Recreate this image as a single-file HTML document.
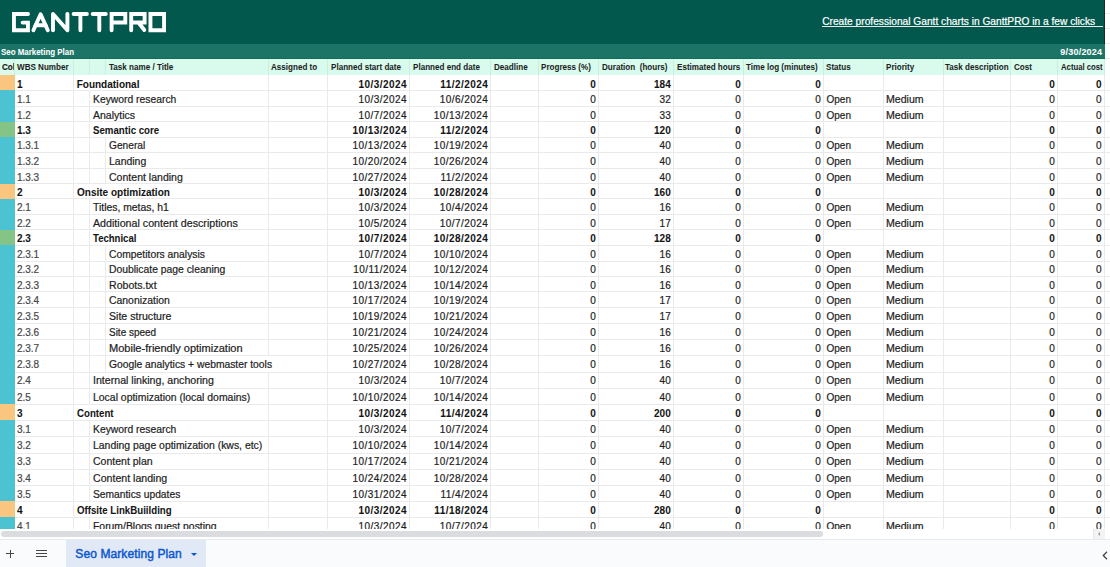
<!DOCTYPE html>
<html><head><meta charset="utf-8"><style>
html,body{margin:0;padding:0;}
body{width:1110px;height:567px;overflow:hidden;position:relative;background:#fff;font-family:"Liberation Sans",sans-serif;}
div{position:absolute;}
.t{position:absolute;white-space:nowrap;-webkit-text-stroke:0.2px currentColor;}
</style></head><body>
<div style="left:0.00px;top:0.00px;width:1104.60px;height:43.70px;background:#03584d;"></div>
<div style="left:1103.80px;top:0.00px;width:0.90px;height:43.70px;background:#1f2a27;"></div>
<div style="left:0.00px;top:43.70px;width:1104.60px;height:15.10px;background:#1b7466;"></div>
<div style="left:0.00px;top:58.80px;width:1104.60px;height:16.50px;background:#d8fbee;"></div>
<div style="left:0.00px;top:57.90px;width:1104.60px;height:0.90px;background:#146a5c;"></div>
<div style="left:1104.60px;top:12.90px;width:6.00px;height:1.00px;background:#eaeaea;"></div>
<div style="left:1104.60px;top:27.90px;width:6.00px;height:1.00px;background:#eaeaea;"></div>
<div style="left:1104.60px;top:43.20px;width:6.00px;height:1.00px;background:#eaeaea;"></div>
<div style="left:1104.60px;top:58.30px;width:6.00px;height:1.00px;background:#eaeaea;"></div>
<svg style="position:absolute;left:0;top:0" width="200" height="44" viewBox="0 0 200 44">
<g fill="none" stroke="#fff" stroke-width="3.9" stroke-linecap="round" stroke-linejoin="miter">
<path d="M28.0 14.05 H13.95 V30.25 H27.95 V22.6 H22.6"/>
<path d="M33.4 30.25 L40.6 14.3 L47.8 30.25" stroke-linejoin="round"/>
<path d="M35.6 25.2 H45.6"/>
<path d="M53 30.25 V14.05 L67.4 30.25 V14.05" stroke-linejoin="round"/>
<path d="M73.6 14.05 H86.9 M80.4 14.05 V30.2"/>
<path d="M92.7 14.05 H105.8 M99.3 14.05 V30.2"/>
<path d="M111.6 30.25 V14.05 H125.3 V22.55 H111.6"/>
<path d="M131.2 30.25 V14.05 H144.6 V22.55 H131.2 M138.4 22.55 L144.3 30.0"/>
<path d="M150.45 14.05 H164.05 V30.25 H150.45 Z"/>
</g></svg>
<span class="t" style="left:822.20px;top:16.07px;font-size:10.2px;line-height:11.720px;color:#fff;letter-spacing:0px;">Create professional Gantt charts in GanttPRO in a few clicks</span>
<div style="left:822.20px;top:25.90px;width:280.60px;height:1.20px;background:#e6ecea;"></div>
<span class="t" style="left:0.80px;top:46.75px;font-size:9.0px;line-height:10.341px;font-weight:bold;-webkit-text-stroke:0.05px currentColor;color:#fff;transform:scaleX(0.88);transform-origin:0 0;">Seo Marketing Plan</span>
<span class="t" style="right:7.80px;top:46.75px;font-size:9.0px;line-height:10.341px;font-weight:bold;-webkit-text-stroke:0.05px currentColor;color:#fff;letter-spacing:0.2px;">9/30/2024</span>
<div style="left:0;top:58.8px;width:13.5px;height:16.5px;overflow:hidden"><span class="t" style="left:1.5px;top:3.43px;font-size:8.7px;line-height:9.996px;font-weight:bold;color:#1f1f1f;transform:scaleX(0.93);transform-origin:0 0">Col</span></div>
<div style="left:13.50px;top:58.80px;width:1.00px;height:16.50px;background:#c9eee0;"></div>
<div style="left:72.80px;top:58.80px;width:1.00px;height:16.50px;background:#c9eee0;"></div>
<div style="left:89.10px;top:58.80px;width:1.00px;height:16.50px;background:#c9eee0;"></div>
<div style="left:105.20px;top:58.80px;width:1.00px;height:16.50px;background:#c9eee0;"></div>
<div style="left:268.20px;top:58.80px;width:1.00px;height:16.50px;background:#c9eee0;"></div>
<div style="left:327.10px;top:58.80px;width:1.00px;height:16.50px;background:#c9eee0;"></div>
<div style="left:408.80px;top:58.80px;width:1.00px;height:16.50px;background:#c9eee0;"></div>
<div style="left:490.00px;top:58.80px;width:1.00px;height:16.50px;background:#c9eee0;"></div>
<div style="left:537.80px;top:58.80px;width:1.00px;height:16.50px;background:#c9eee0;"></div>
<div style="left:597.80px;top:58.80px;width:1.00px;height:16.50px;background:#c9eee0;"></div>
<div style="left:672.70px;top:58.80px;width:1.00px;height:16.50px;background:#c9eee0;"></div>
<div style="left:742.80px;top:58.80px;width:1.00px;height:16.50px;background:#c9eee0;"></div>
<div style="left:822.90px;top:58.80px;width:1.00px;height:16.50px;background:#c9eee0;"></div>
<div style="left:882.80px;top:58.80px;width:1.00px;height:16.50px;background:#c9eee0;"></div>
<div style="left:942.50px;top:58.80px;width:1.00px;height:16.50px;background:#c9eee0;"></div>
<div style="left:1009.80px;top:58.80px;width:1.00px;height:16.50px;background:#c9eee0;"></div>
<div style="left:1057.30px;top:58.80px;width:1.00px;height:16.50px;background:#c9eee0;"></div>
<div style="left:1104.10px;top:58.80px;width:1.00px;height:16.50px;background:#c9eee0;"></div>
<span class="t" style="left:16.90px;top:62.23px;font-size:8.7px;line-height:9.996px;font-weight:bold;-webkit-text-stroke:0.05px currentColor;color:#1f1f1f;transform:scaleX(0.93);transform-origin:0 0;">WBS Number</span>
<span class="t" style="left:108.80px;top:62.23px;font-size:8.7px;line-height:9.996px;font-weight:bold;-webkit-text-stroke:0.05px currentColor;color:#1f1f1f;transform:scaleX(0.93);transform-origin:0 0;">Task name / Title</span>
<span class="t" style="left:271.10px;top:62.23px;font-size:8.7px;line-height:9.996px;font-weight:bold;-webkit-text-stroke:0.05px currentColor;color:#1f1f1f;transform:scaleX(0.93);transform-origin:0 0;">Assigned to</span>
<span class="t" style="left:330.50px;top:62.23px;font-size:8.7px;line-height:9.996px;font-weight:bold;-webkit-text-stroke:0.05px currentColor;color:#1f1f1f;transform:scaleX(0.93);transform-origin:0 0;">Planned start date</span>
<span class="t" style="left:412.60px;top:62.23px;font-size:8.7px;line-height:9.996px;font-weight:bold;-webkit-text-stroke:0.05px currentColor;color:#1f1f1f;transform:scaleX(0.93);transform-origin:0 0;">Planned end date</span>
<span class="t" style="left:493.70px;top:62.23px;font-size:8.7px;line-height:9.996px;font-weight:bold;-webkit-text-stroke:0.05px currentColor;color:#1f1f1f;transform:scaleX(0.93);transform-origin:0 0;">Deadline</span>
<span class="t" style="left:540.70px;top:62.23px;font-size:8.7px;line-height:9.996px;font-weight:bold;-webkit-text-stroke:0.05px currentColor;color:#1f1f1f;transform:scaleX(0.93);transform-origin:0 0;">Progress (%)</span>
<span class="t" style="left:601.60px;top:62.23px;font-size:8.7px;line-height:9.996px;font-weight:bold;-webkit-text-stroke:0.05px currentColor;color:#1f1f1f;transform:scaleX(0.93);transform-origin:0 0;">Duration&nbsp; (hours)</span>
<span class="t" style="left:676.50px;top:62.23px;font-size:8.7px;line-height:9.996px;font-weight:bold;-webkit-text-stroke:0.05px currentColor;color:#1f1f1f;transform:scaleX(0.93);transform-origin:0 0;">Estimated hours</span>
<span class="t" style="left:746.20px;top:62.23px;font-size:8.7px;line-height:9.996px;font-weight:bold;-webkit-text-stroke:0.05px currentColor;color:#1f1f1f;transform:scaleX(0.93);transform-origin:0 0;">Time log (minutes)</span>
<span class="t" style="left:826.30px;top:62.23px;font-size:8.7px;line-height:9.996px;font-weight:bold;-webkit-text-stroke:0.05px currentColor;color:#1f1f1f;transform:scaleX(0.93);transform-origin:0 0;">Status</span>
<span class="t" style="left:885.60px;top:62.23px;font-size:8.7px;line-height:9.996px;font-weight:bold;-webkit-text-stroke:0.05px currentColor;color:#1f1f1f;transform:scaleX(0.93);transform-origin:0 0;">Priority</span>
<span class="t" style="left:945.40px;top:62.23px;font-size:8.7px;line-height:9.996px;font-weight:bold;-webkit-text-stroke:0.05px currentColor;color:#1f1f1f;transform:scaleX(0.93);transform-origin:0 0;">Task description</span>
<span class="t" style="left:1013.50px;top:62.23px;font-size:8.7px;line-height:9.996px;font-weight:bold;-webkit-text-stroke:0.05px currentColor;color:#1f1f1f;transform:scaleX(0.93);transform-origin:0 0;">Cost</span>
<span class="t" style="left:1061.00px;top:62.23px;font-size:8.7px;line-height:9.996px;font-weight:bold;-webkit-text-stroke:0.05px currentColor;color:#1f1f1f;transform:scaleX(0.89);transform-origin:0 0;">Actual cost</span>
<div style="left:0;top:0;width:1110px;height:529px;overflow:hidden">
<div style="left:0.00px;top:75.00px;width:14.50px;height:15.00px;background:#f9c57f;"></div>
<div style="left:14.50px;top:89.90px;width:1095.50px;height:1.00px;background:#eaeaea;"></div>
<div style="left:72.80px;top:75.30px;width:1.00px;height:15.10px;background:#eaeaea;"></div>
<div style="left:268.20px;top:75.30px;width:1.00px;height:15.10px;background:#eaeaea;"></div>
<div style="left:327.10px;top:75.30px;width:1.00px;height:15.10px;background:#eaeaea;"></div>
<div style="left:408.80px;top:75.30px;width:1.00px;height:15.10px;background:#eaeaea;"></div>
<div style="left:490.00px;top:75.30px;width:1.00px;height:15.10px;background:#eaeaea;"></div>
<div style="left:537.80px;top:75.30px;width:1.00px;height:15.10px;background:#eaeaea;"></div>
<div style="left:597.80px;top:75.30px;width:1.00px;height:15.10px;background:#eaeaea;"></div>
<div style="left:672.70px;top:75.30px;width:1.00px;height:15.10px;background:#eaeaea;"></div>
<div style="left:742.80px;top:75.30px;width:1.00px;height:15.10px;background:#eaeaea;"></div>
<div style="left:822.90px;top:75.30px;width:1.00px;height:15.10px;background:#eaeaea;"></div>
<div style="left:882.80px;top:75.30px;width:1.00px;height:15.10px;background:#eaeaea;"></div>
<div style="left:942.50px;top:75.30px;width:1.00px;height:15.10px;background:#eaeaea;"></div>
<div style="left:1009.80px;top:75.30px;width:1.00px;height:15.10px;background:#eaeaea;"></div>
<div style="left:1057.30px;top:75.30px;width:1.00px;height:15.10px;background:#eaeaea;"></div>
<div style="left:1104.10px;top:75.30px;width:1.00px;height:15.10px;background:#eaeaea;"></div>
<span class="t" style="left:16.90px;top:78.65px;font-size:10.0px;line-height:11.490px;font-weight:bold;-webkit-text-stroke:0.05px currentColor;color:#141414;">1</span>
<span class="t" style="left:76.70px;top:78.65px;font-size:10.0px;line-height:11.490px;font-weight:bold;-webkit-text-stroke:0.05px currentColor;color:#141414;transform:scaleX(1.0);transform-origin:0 0;">Foundational</span>
<span class="t" style="right:702.95px;top:78.65px;font-size:10.0px;line-height:11.490px;font-weight:bold;-webkit-text-stroke:0.05px currentColor;color:#141414;letter-spacing:0.45px;">10/3/2024</span>
<span class="t" style="right:621.75px;top:78.65px;font-size:10.0px;line-height:11.490px;font-weight:bold;-webkit-text-stroke:0.05px currentColor;color:#141414;letter-spacing:0.45px;">11/2/2024</span>
<span class="t" style="right:514.20px;top:78.65px;font-size:10.0px;line-height:11.490px;font-weight:bold;-webkit-text-stroke:0.05px currentColor;color:#141414;">0</span>
<span class="t" style="right:439.30px;top:78.65px;font-size:10.0px;line-height:11.490px;font-weight:bold;-webkit-text-stroke:0.05px currentColor;color:#141414;">184</span>
<span class="t" style="right:369.20px;top:78.65px;font-size:10.0px;line-height:11.490px;font-weight:bold;-webkit-text-stroke:0.05px currentColor;color:#141414;">0</span>
<span class="t" style="right:289.10px;top:78.65px;font-size:10.0px;line-height:11.490px;font-weight:bold;-webkit-text-stroke:0.05px currentColor;color:#141414;">0</span>
<span class="t" style="right:55.30px;top:78.65px;font-size:10.0px;line-height:11.490px;font-weight:bold;-webkit-text-stroke:0.05px currentColor;color:#141414;">0</span>
<span class="t" style="right:8.50px;top:78.65px;font-size:10.0px;line-height:11.490px;font-weight:bold;-webkit-text-stroke:0.05px currentColor;color:#141414;">0</span>
<div style="left:0.00px;top:90.00px;width:14.50px;height:16.00px;background:#4cc3d3;"></div>
<div style="left:14.50px;top:105.80px;width:1095.50px;height:1.00px;background:#eaeaea;"></div>
<div style="left:72.80px;top:90.40px;width:1.00px;height:15.90px;background:#eaeaea;"></div>
<div style="left:89.10px;top:90.40px;width:1.00px;height:15.90px;background:#eaeaea;"></div>
<div style="left:268.20px;top:90.40px;width:1.00px;height:15.90px;background:#eaeaea;"></div>
<div style="left:327.10px;top:90.40px;width:1.00px;height:15.90px;background:#eaeaea;"></div>
<div style="left:408.80px;top:90.40px;width:1.00px;height:15.90px;background:#eaeaea;"></div>
<div style="left:490.00px;top:90.40px;width:1.00px;height:15.90px;background:#eaeaea;"></div>
<div style="left:537.80px;top:90.40px;width:1.00px;height:15.90px;background:#eaeaea;"></div>
<div style="left:597.80px;top:90.40px;width:1.00px;height:15.90px;background:#eaeaea;"></div>
<div style="left:672.70px;top:90.40px;width:1.00px;height:15.90px;background:#eaeaea;"></div>
<div style="left:742.80px;top:90.40px;width:1.00px;height:15.90px;background:#eaeaea;"></div>
<div style="left:822.90px;top:90.40px;width:1.00px;height:15.90px;background:#eaeaea;"></div>
<div style="left:882.80px;top:90.40px;width:1.00px;height:15.90px;background:#eaeaea;"></div>
<div style="left:942.50px;top:90.40px;width:1.00px;height:15.90px;background:#eaeaea;"></div>
<div style="left:1009.80px;top:90.40px;width:1.00px;height:15.90px;background:#eaeaea;"></div>
<div style="left:1057.30px;top:90.40px;width:1.00px;height:15.90px;background:#eaeaea;"></div>
<div style="left:1104.10px;top:90.40px;width:1.00px;height:15.90px;background:#eaeaea;"></div>
<span class="t" style="left:16.90px;top:93.75px;font-size:10.0px;line-height:11.490px;color:#474747;">1.1</span>
<span class="t" style="left:92.60px;top:93.75px;font-size:10.0px;line-height:11.490px;color:#1e1e1e;transform:scaleX(1.034);transform-origin:0 0;">Keyword research</span>
<span class="t" style="right:702.95px;top:93.75px;font-size:10.0px;line-height:11.490px;color:#1e1e1e;letter-spacing:0.45px;">10/3/2024</span>
<span class="t" style="right:621.75px;top:93.75px;font-size:10.0px;line-height:11.490px;color:#1e1e1e;letter-spacing:0.45px;">10/6/2024</span>
<span class="t" style="right:514.20px;top:93.75px;font-size:10.0px;line-height:11.490px;color:#1e1e1e;">0</span>
<span class="t" style="right:439.30px;top:93.75px;font-size:10.0px;line-height:11.490px;color:#1e1e1e;">32</span>
<span class="t" style="right:369.20px;top:93.75px;font-size:10.0px;line-height:11.490px;color:#1e1e1e;">0</span>
<span class="t" style="right:289.10px;top:93.75px;font-size:10.0px;line-height:11.490px;color:#1e1e1e;">0</span>
<span class="t" style="right:55.30px;top:93.75px;font-size:10.0px;line-height:11.490px;color:#1e1e1e;">0</span>
<span class="t" style="right:8.50px;top:93.75px;font-size:10.0px;line-height:11.490px;color:#1e1e1e;">0</span>
<span class="t" style="left:826.50px;top:93.75px;font-size:10.0px;line-height:11.490px;color:#1e1e1e;">Open</span>
<span class="t" style="left:886.30px;top:93.75px;font-size:10.0px;line-height:11.490px;color:#1e1e1e;transform:scaleX(1.06);transform-origin:0 0;">Medium</span>
<div style="left:0.00px;top:106.00px;width:14.50px;height:16.00px;background:#4cc3d3;"></div>
<div style="left:14.50px;top:121.10px;width:1095.50px;height:1.00px;background:#eaeaea;"></div>
<div style="left:72.80px;top:106.30px;width:1.00px;height:15.30px;background:#eaeaea;"></div>
<div style="left:89.10px;top:106.30px;width:1.00px;height:15.30px;background:#eaeaea;"></div>
<div style="left:268.20px;top:106.30px;width:1.00px;height:15.30px;background:#eaeaea;"></div>
<div style="left:327.10px;top:106.30px;width:1.00px;height:15.30px;background:#eaeaea;"></div>
<div style="left:408.80px;top:106.30px;width:1.00px;height:15.30px;background:#eaeaea;"></div>
<div style="left:490.00px;top:106.30px;width:1.00px;height:15.30px;background:#eaeaea;"></div>
<div style="left:537.80px;top:106.30px;width:1.00px;height:15.30px;background:#eaeaea;"></div>
<div style="left:597.80px;top:106.30px;width:1.00px;height:15.30px;background:#eaeaea;"></div>
<div style="left:672.70px;top:106.30px;width:1.00px;height:15.30px;background:#eaeaea;"></div>
<div style="left:742.80px;top:106.30px;width:1.00px;height:15.30px;background:#eaeaea;"></div>
<div style="left:822.90px;top:106.30px;width:1.00px;height:15.30px;background:#eaeaea;"></div>
<div style="left:882.80px;top:106.30px;width:1.00px;height:15.30px;background:#eaeaea;"></div>
<div style="left:942.50px;top:106.30px;width:1.00px;height:15.30px;background:#eaeaea;"></div>
<div style="left:1009.80px;top:106.30px;width:1.00px;height:15.30px;background:#eaeaea;"></div>
<div style="left:1057.30px;top:106.30px;width:1.00px;height:15.30px;background:#eaeaea;"></div>
<div style="left:1104.10px;top:106.30px;width:1.00px;height:15.30px;background:#eaeaea;"></div>
<span class="t" style="left:16.90px;top:109.65px;font-size:10.0px;line-height:11.490px;color:#474747;">1.2</span>
<span class="t" style="left:92.60px;top:109.65px;font-size:10.0px;line-height:11.490px;color:#1e1e1e;transform:scaleX(1.051);transform-origin:0 0;">Analytics</span>
<span class="t" style="right:702.95px;top:109.65px;font-size:10.0px;line-height:11.490px;color:#1e1e1e;letter-spacing:0.45px;">10/7/2024</span>
<span class="t" style="right:621.75px;top:109.65px;font-size:10.0px;line-height:11.490px;color:#1e1e1e;letter-spacing:0.45px;">10/13/2024</span>
<span class="t" style="right:514.20px;top:109.65px;font-size:10.0px;line-height:11.490px;color:#1e1e1e;">0</span>
<span class="t" style="right:439.30px;top:109.65px;font-size:10.0px;line-height:11.490px;color:#1e1e1e;">33</span>
<span class="t" style="right:369.20px;top:109.65px;font-size:10.0px;line-height:11.490px;color:#1e1e1e;">0</span>
<span class="t" style="right:289.10px;top:109.65px;font-size:10.0px;line-height:11.490px;color:#1e1e1e;">0</span>
<span class="t" style="right:55.30px;top:109.65px;font-size:10.0px;line-height:11.490px;color:#1e1e1e;">0</span>
<span class="t" style="right:8.50px;top:109.65px;font-size:10.0px;line-height:11.490px;color:#1e1e1e;">0</span>
<span class="t" style="left:826.50px;top:109.65px;font-size:10.0px;line-height:11.490px;color:#1e1e1e;">Open</span>
<span class="t" style="left:886.30px;top:109.65px;font-size:10.0px;line-height:11.490px;color:#1e1e1e;transform:scaleX(1.06);transform-origin:0 0;">Medium</span>
<div style="left:0.00px;top:122.00px;width:14.50px;height:15.00px;background:#84c486;"></div>
<div style="left:14.50px;top:136.60px;width:1095.50px;height:1.00px;background:#eaeaea;"></div>
<div style="left:72.80px;top:121.60px;width:1.00px;height:15.50px;background:#eaeaea;"></div>
<div style="left:89.10px;top:121.60px;width:1.00px;height:15.50px;background:#eaeaea;"></div>
<div style="left:268.20px;top:121.60px;width:1.00px;height:15.50px;background:#eaeaea;"></div>
<div style="left:327.10px;top:121.60px;width:1.00px;height:15.50px;background:#eaeaea;"></div>
<div style="left:408.80px;top:121.60px;width:1.00px;height:15.50px;background:#eaeaea;"></div>
<div style="left:490.00px;top:121.60px;width:1.00px;height:15.50px;background:#eaeaea;"></div>
<div style="left:537.80px;top:121.60px;width:1.00px;height:15.50px;background:#eaeaea;"></div>
<div style="left:597.80px;top:121.60px;width:1.00px;height:15.50px;background:#eaeaea;"></div>
<div style="left:672.70px;top:121.60px;width:1.00px;height:15.50px;background:#eaeaea;"></div>
<div style="left:742.80px;top:121.60px;width:1.00px;height:15.50px;background:#eaeaea;"></div>
<div style="left:822.90px;top:121.60px;width:1.00px;height:15.50px;background:#eaeaea;"></div>
<div style="left:882.80px;top:121.60px;width:1.00px;height:15.50px;background:#eaeaea;"></div>
<div style="left:942.50px;top:121.60px;width:1.00px;height:15.50px;background:#eaeaea;"></div>
<div style="left:1009.80px;top:121.60px;width:1.00px;height:15.50px;background:#eaeaea;"></div>
<div style="left:1057.30px;top:121.60px;width:1.00px;height:15.50px;background:#eaeaea;"></div>
<div style="left:1104.10px;top:121.60px;width:1.00px;height:15.50px;background:#eaeaea;"></div>
<span class="t" style="left:16.90px;top:124.95px;font-size:10.0px;line-height:11.490px;font-weight:bold;-webkit-text-stroke:0.05px currentColor;color:#141414;">1.3</span>
<span class="t" style="left:92.60px;top:124.95px;font-size:10.0px;line-height:11.490px;font-weight:bold;-webkit-text-stroke:0.05px currentColor;color:#141414;transform:scaleX(0.968);transform-origin:0 0;">Semantic core</span>
<span class="t" style="right:702.95px;top:124.95px;font-size:10.0px;line-height:11.490px;font-weight:bold;-webkit-text-stroke:0.05px currentColor;color:#141414;letter-spacing:0.45px;">10/13/2024</span>
<span class="t" style="right:621.75px;top:124.95px;font-size:10.0px;line-height:11.490px;font-weight:bold;-webkit-text-stroke:0.05px currentColor;color:#141414;letter-spacing:0.45px;">11/2/2024</span>
<span class="t" style="right:514.20px;top:124.95px;font-size:10.0px;line-height:11.490px;font-weight:bold;-webkit-text-stroke:0.05px currentColor;color:#141414;">0</span>
<span class="t" style="right:439.30px;top:124.95px;font-size:10.0px;line-height:11.490px;font-weight:bold;-webkit-text-stroke:0.05px currentColor;color:#141414;">120</span>
<span class="t" style="right:369.20px;top:124.95px;font-size:10.0px;line-height:11.490px;font-weight:bold;-webkit-text-stroke:0.05px currentColor;color:#141414;">0</span>
<span class="t" style="right:289.10px;top:124.95px;font-size:10.0px;line-height:11.490px;font-weight:bold;-webkit-text-stroke:0.05px currentColor;color:#141414;">0</span>
<span class="t" style="right:55.30px;top:124.95px;font-size:10.0px;line-height:11.490px;font-weight:bold;-webkit-text-stroke:0.05px currentColor;color:#141414;">0</span>
<span class="t" style="right:8.50px;top:124.95px;font-size:10.0px;line-height:11.490px;font-weight:bold;-webkit-text-stroke:0.05px currentColor;color:#141414;">0</span>
<div style="left:0.00px;top:137.00px;width:14.50px;height:16.00px;background:#4cc3d3;"></div>
<div style="left:14.50px;top:152.10px;width:1095.50px;height:1.00px;background:#eaeaea;"></div>
<div style="left:72.80px;top:137.10px;width:1.00px;height:15.50px;background:#eaeaea;"></div>
<div style="left:89.10px;top:137.10px;width:1.00px;height:15.50px;background:#eaeaea;"></div>
<div style="left:105.20px;top:137.10px;width:1.00px;height:15.50px;background:#eaeaea;"></div>
<div style="left:268.20px;top:137.10px;width:1.00px;height:15.50px;background:#eaeaea;"></div>
<div style="left:327.10px;top:137.10px;width:1.00px;height:15.50px;background:#eaeaea;"></div>
<div style="left:408.80px;top:137.10px;width:1.00px;height:15.50px;background:#eaeaea;"></div>
<div style="left:490.00px;top:137.10px;width:1.00px;height:15.50px;background:#eaeaea;"></div>
<div style="left:537.80px;top:137.10px;width:1.00px;height:15.50px;background:#eaeaea;"></div>
<div style="left:597.80px;top:137.10px;width:1.00px;height:15.50px;background:#eaeaea;"></div>
<div style="left:672.70px;top:137.10px;width:1.00px;height:15.50px;background:#eaeaea;"></div>
<div style="left:742.80px;top:137.10px;width:1.00px;height:15.50px;background:#eaeaea;"></div>
<div style="left:822.90px;top:137.10px;width:1.00px;height:15.50px;background:#eaeaea;"></div>
<div style="left:882.80px;top:137.10px;width:1.00px;height:15.50px;background:#eaeaea;"></div>
<div style="left:942.50px;top:137.10px;width:1.00px;height:15.50px;background:#eaeaea;"></div>
<div style="left:1009.80px;top:137.10px;width:1.00px;height:15.50px;background:#eaeaea;"></div>
<div style="left:1057.30px;top:137.10px;width:1.00px;height:15.50px;background:#eaeaea;"></div>
<div style="left:1104.10px;top:137.10px;width:1.00px;height:15.50px;background:#eaeaea;"></div>
<span class="t" style="left:16.90px;top:140.45px;font-size:10.0px;line-height:11.490px;color:#474747;">1.3.1</span>
<span class="t" style="left:108.80px;top:140.45px;font-size:10.0px;line-height:11.490px;color:#1e1e1e;transform:scaleX(1.017);transform-origin:0 0;">General</span>
<span class="t" style="right:702.95px;top:140.45px;font-size:10.0px;line-height:11.490px;color:#1e1e1e;letter-spacing:0.45px;">10/13/2024</span>
<span class="t" style="right:621.75px;top:140.45px;font-size:10.0px;line-height:11.490px;color:#1e1e1e;letter-spacing:0.45px;">10/19/2024</span>
<span class="t" style="right:514.20px;top:140.45px;font-size:10.0px;line-height:11.490px;color:#1e1e1e;">0</span>
<span class="t" style="right:439.30px;top:140.45px;font-size:10.0px;line-height:11.490px;color:#1e1e1e;">40</span>
<span class="t" style="right:369.20px;top:140.45px;font-size:10.0px;line-height:11.490px;color:#1e1e1e;">0</span>
<span class="t" style="right:289.10px;top:140.45px;font-size:10.0px;line-height:11.490px;color:#1e1e1e;">0</span>
<span class="t" style="right:55.30px;top:140.45px;font-size:10.0px;line-height:11.490px;color:#1e1e1e;">0</span>
<span class="t" style="right:8.50px;top:140.45px;font-size:10.0px;line-height:11.490px;color:#1e1e1e;">0</span>
<span class="t" style="left:826.50px;top:140.45px;font-size:10.0px;line-height:11.490px;color:#1e1e1e;">Open</span>
<span class="t" style="left:886.30px;top:140.45px;font-size:10.0px;line-height:11.490px;color:#1e1e1e;transform:scaleX(1.06);transform-origin:0 0;">Medium</span>
<div style="left:0.00px;top:153.00px;width:14.50px;height:15.00px;background:#4cc3d3;"></div>
<div style="left:14.50px;top:168.00px;width:1095.50px;height:1.00px;background:#eaeaea;"></div>
<div style="left:72.80px;top:152.60px;width:1.00px;height:15.90px;background:#eaeaea;"></div>
<div style="left:89.10px;top:152.60px;width:1.00px;height:15.90px;background:#eaeaea;"></div>
<div style="left:105.20px;top:152.60px;width:1.00px;height:15.90px;background:#eaeaea;"></div>
<div style="left:268.20px;top:152.60px;width:1.00px;height:15.90px;background:#eaeaea;"></div>
<div style="left:327.10px;top:152.60px;width:1.00px;height:15.90px;background:#eaeaea;"></div>
<div style="left:408.80px;top:152.60px;width:1.00px;height:15.90px;background:#eaeaea;"></div>
<div style="left:490.00px;top:152.60px;width:1.00px;height:15.90px;background:#eaeaea;"></div>
<div style="left:537.80px;top:152.60px;width:1.00px;height:15.90px;background:#eaeaea;"></div>
<div style="left:597.80px;top:152.60px;width:1.00px;height:15.90px;background:#eaeaea;"></div>
<div style="left:672.70px;top:152.60px;width:1.00px;height:15.90px;background:#eaeaea;"></div>
<div style="left:742.80px;top:152.60px;width:1.00px;height:15.90px;background:#eaeaea;"></div>
<div style="left:822.90px;top:152.60px;width:1.00px;height:15.90px;background:#eaeaea;"></div>
<div style="left:882.80px;top:152.60px;width:1.00px;height:15.90px;background:#eaeaea;"></div>
<div style="left:942.50px;top:152.60px;width:1.00px;height:15.90px;background:#eaeaea;"></div>
<div style="left:1009.80px;top:152.60px;width:1.00px;height:15.90px;background:#eaeaea;"></div>
<div style="left:1057.30px;top:152.60px;width:1.00px;height:15.90px;background:#eaeaea;"></div>
<div style="left:1104.10px;top:152.60px;width:1.00px;height:15.90px;background:#eaeaea;"></div>
<span class="t" style="left:16.90px;top:155.95px;font-size:10.0px;line-height:11.490px;color:#474747;">1.3.2</span>
<span class="t" style="left:108.80px;top:155.95px;font-size:10.0px;line-height:11.490px;color:#1e1e1e;transform:scaleX(1.047);transform-origin:0 0;">Landing</span>
<span class="t" style="right:702.95px;top:155.95px;font-size:10.0px;line-height:11.490px;color:#1e1e1e;letter-spacing:0.45px;">10/20/2024</span>
<span class="t" style="right:621.75px;top:155.95px;font-size:10.0px;line-height:11.490px;color:#1e1e1e;letter-spacing:0.45px;">10/26/2024</span>
<span class="t" style="right:514.20px;top:155.95px;font-size:10.0px;line-height:11.490px;color:#1e1e1e;">0</span>
<span class="t" style="right:439.30px;top:155.95px;font-size:10.0px;line-height:11.490px;color:#1e1e1e;">40</span>
<span class="t" style="right:369.20px;top:155.95px;font-size:10.0px;line-height:11.490px;color:#1e1e1e;">0</span>
<span class="t" style="right:289.10px;top:155.95px;font-size:10.0px;line-height:11.490px;color:#1e1e1e;">0</span>
<span class="t" style="right:55.30px;top:155.95px;font-size:10.0px;line-height:11.490px;color:#1e1e1e;">0</span>
<span class="t" style="right:8.50px;top:155.95px;font-size:10.0px;line-height:11.490px;color:#1e1e1e;">0</span>
<span class="t" style="left:826.50px;top:155.95px;font-size:10.0px;line-height:11.490px;color:#1e1e1e;">Open</span>
<span class="t" style="left:886.30px;top:155.95px;font-size:10.0px;line-height:11.490px;color:#1e1e1e;transform:scaleX(1.06);transform-origin:0 0;">Medium</span>
<div style="left:0.00px;top:168.00px;width:14.50px;height:16.00px;background:#4cc3d3;"></div>
<div style="left:14.50px;top:183.00px;width:1095.50px;height:1.00px;background:#eaeaea;"></div>
<div style="left:72.80px;top:168.50px;width:1.00px;height:15.00px;background:#eaeaea;"></div>
<div style="left:89.10px;top:168.50px;width:1.00px;height:15.00px;background:#eaeaea;"></div>
<div style="left:105.20px;top:168.50px;width:1.00px;height:15.00px;background:#eaeaea;"></div>
<div style="left:268.20px;top:168.50px;width:1.00px;height:15.00px;background:#eaeaea;"></div>
<div style="left:327.10px;top:168.50px;width:1.00px;height:15.00px;background:#eaeaea;"></div>
<div style="left:408.80px;top:168.50px;width:1.00px;height:15.00px;background:#eaeaea;"></div>
<div style="left:490.00px;top:168.50px;width:1.00px;height:15.00px;background:#eaeaea;"></div>
<div style="left:537.80px;top:168.50px;width:1.00px;height:15.00px;background:#eaeaea;"></div>
<div style="left:597.80px;top:168.50px;width:1.00px;height:15.00px;background:#eaeaea;"></div>
<div style="left:672.70px;top:168.50px;width:1.00px;height:15.00px;background:#eaeaea;"></div>
<div style="left:742.80px;top:168.50px;width:1.00px;height:15.00px;background:#eaeaea;"></div>
<div style="left:822.90px;top:168.50px;width:1.00px;height:15.00px;background:#eaeaea;"></div>
<div style="left:882.80px;top:168.50px;width:1.00px;height:15.00px;background:#eaeaea;"></div>
<div style="left:942.50px;top:168.50px;width:1.00px;height:15.00px;background:#eaeaea;"></div>
<div style="left:1009.80px;top:168.50px;width:1.00px;height:15.00px;background:#eaeaea;"></div>
<div style="left:1057.30px;top:168.50px;width:1.00px;height:15.00px;background:#eaeaea;"></div>
<div style="left:1104.10px;top:168.50px;width:1.00px;height:15.00px;background:#eaeaea;"></div>
<span class="t" style="left:16.90px;top:171.85px;font-size:10.0px;line-height:11.490px;color:#474747;">1.3.3</span>
<span class="t" style="left:108.80px;top:171.85px;font-size:10.0px;line-height:11.490px;color:#1e1e1e;transform:scaleX(1.054);transform-origin:0 0;">Content landing</span>
<span class="t" style="right:702.95px;top:171.85px;font-size:10.0px;line-height:11.490px;color:#1e1e1e;letter-spacing:0.45px;">10/27/2024</span>
<span class="t" style="right:621.75px;top:171.85px;font-size:10.0px;line-height:11.490px;color:#1e1e1e;letter-spacing:0.45px;">11/2/2024</span>
<span class="t" style="right:514.20px;top:171.85px;font-size:10.0px;line-height:11.490px;color:#1e1e1e;">0</span>
<span class="t" style="right:439.30px;top:171.85px;font-size:10.0px;line-height:11.490px;color:#1e1e1e;">40</span>
<span class="t" style="right:369.20px;top:171.85px;font-size:10.0px;line-height:11.490px;color:#1e1e1e;">0</span>
<span class="t" style="right:289.10px;top:171.85px;font-size:10.0px;line-height:11.490px;color:#1e1e1e;">0</span>
<span class="t" style="right:55.30px;top:171.85px;font-size:10.0px;line-height:11.490px;color:#1e1e1e;">0</span>
<span class="t" style="right:8.50px;top:171.85px;font-size:10.0px;line-height:11.490px;color:#1e1e1e;">0</span>
<span class="t" style="left:826.50px;top:171.85px;font-size:10.0px;line-height:11.490px;color:#1e1e1e;">Open</span>
<span class="t" style="left:886.30px;top:171.85px;font-size:10.0px;line-height:11.490px;color:#1e1e1e;transform:scaleX(1.06);transform-origin:0 0;">Medium</span>
<div style="left:0.00px;top:184.00px;width:14.50px;height:15.00px;background:#f9c57f;"></div>
<div style="left:14.50px;top:198.10px;width:1095.50px;height:1.00px;background:#eaeaea;"></div>
<div style="left:72.80px;top:183.50px;width:1.00px;height:15.10px;background:#eaeaea;"></div>
<div style="left:268.20px;top:183.50px;width:1.00px;height:15.10px;background:#eaeaea;"></div>
<div style="left:327.10px;top:183.50px;width:1.00px;height:15.10px;background:#eaeaea;"></div>
<div style="left:408.80px;top:183.50px;width:1.00px;height:15.10px;background:#eaeaea;"></div>
<div style="left:490.00px;top:183.50px;width:1.00px;height:15.10px;background:#eaeaea;"></div>
<div style="left:537.80px;top:183.50px;width:1.00px;height:15.10px;background:#eaeaea;"></div>
<div style="left:597.80px;top:183.50px;width:1.00px;height:15.10px;background:#eaeaea;"></div>
<div style="left:672.70px;top:183.50px;width:1.00px;height:15.10px;background:#eaeaea;"></div>
<div style="left:742.80px;top:183.50px;width:1.00px;height:15.10px;background:#eaeaea;"></div>
<div style="left:822.90px;top:183.50px;width:1.00px;height:15.10px;background:#eaeaea;"></div>
<div style="left:882.80px;top:183.50px;width:1.00px;height:15.10px;background:#eaeaea;"></div>
<div style="left:942.50px;top:183.50px;width:1.00px;height:15.10px;background:#eaeaea;"></div>
<div style="left:1009.80px;top:183.50px;width:1.00px;height:15.10px;background:#eaeaea;"></div>
<div style="left:1057.30px;top:183.50px;width:1.00px;height:15.10px;background:#eaeaea;"></div>
<div style="left:1104.10px;top:183.50px;width:1.00px;height:15.10px;background:#eaeaea;"></div>
<span class="t" style="left:16.90px;top:186.85px;font-size:10.0px;line-height:11.490px;font-weight:bold;-webkit-text-stroke:0.05px currentColor;color:#141414;">2</span>
<span class="t" style="left:76.70px;top:186.85px;font-size:10.0px;line-height:11.490px;font-weight:bold;-webkit-text-stroke:0.05px currentColor;color:#141414;transform:scaleX(1.001);transform-origin:0 0;">Onsite optimization</span>
<span class="t" style="right:702.95px;top:186.85px;font-size:10.0px;line-height:11.490px;font-weight:bold;-webkit-text-stroke:0.05px currentColor;color:#141414;letter-spacing:0.45px;">10/3/2024</span>
<span class="t" style="right:621.75px;top:186.85px;font-size:10.0px;line-height:11.490px;font-weight:bold;-webkit-text-stroke:0.05px currentColor;color:#141414;letter-spacing:0.45px;">10/28/2024</span>
<span class="t" style="right:514.20px;top:186.85px;font-size:10.0px;line-height:11.490px;font-weight:bold;-webkit-text-stroke:0.05px currentColor;color:#141414;">0</span>
<span class="t" style="right:439.30px;top:186.85px;font-size:10.0px;line-height:11.490px;font-weight:bold;-webkit-text-stroke:0.05px currentColor;color:#141414;">160</span>
<span class="t" style="right:369.20px;top:186.85px;font-size:10.0px;line-height:11.490px;font-weight:bold;-webkit-text-stroke:0.05px currentColor;color:#141414;">0</span>
<span class="t" style="right:289.10px;top:186.85px;font-size:10.0px;line-height:11.490px;font-weight:bold;-webkit-text-stroke:0.05px currentColor;color:#141414;">0</span>
<span class="t" style="right:55.30px;top:186.85px;font-size:10.0px;line-height:11.490px;font-weight:bold;-webkit-text-stroke:0.05px currentColor;color:#141414;">0</span>
<span class="t" style="right:8.50px;top:186.85px;font-size:10.0px;line-height:11.490px;font-weight:bold;-webkit-text-stroke:0.05px currentColor;color:#141414;">0</span>
<div style="left:0.00px;top:199.00px;width:14.50px;height:16.00px;background:#4cc3d3;"></div>
<div style="left:14.50px;top:214.10px;width:1095.50px;height:1.00px;background:#eaeaea;"></div>
<div style="left:72.80px;top:198.60px;width:1.00px;height:16.00px;background:#eaeaea;"></div>
<div style="left:89.10px;top:198.60px;width:1.00px;height:16.00px;background:#eaeaea;"></div>
<div style="left:268.20px;top:198.60px;width:1.00px;height:16.00px;background:#eaeaea;"></div>
<div style="left:327.10px;top:198.60px;width:1.00px;height:16.00px;background:#eaeaea;"></div>
<div style="left:408.80px;top:198.60px;width:1.00px;height:16.00px;background:#eaeaea;"></div>
<div style="left:490.00px;top:198.60px;width:1.00px;height:16.00px;background:#eaeaea;"></div>
<div style="left:537.80px;top:198.60px;width:1.00px;height:16.00px;background:#eaeaea;"></div>
<div style="left:597.80px;top:198.60px;width:1.00px;height:16.00px;background:#eaeaea;"></div>
<div style="left:672.70px;top:198.60px;width:1.00px;height:16.00px;background:#eaeaea;"></div>
<div style="left:742.80px;top:198.60px;width:1.00px;height:16.00px;background:#eaeaea;"></div>
<div style="left:822.90px;top:198.60px;width:1.00px;height:16.00px;background:#eaeaea;"></div>
<div style="left:882.80px;top:198.60px;width:1.00px;height:16.00px;background:#eaeaea;"></div>
<div style="left:942.50px;top:198.60px;width:1.00px;height:16.00px;background:#eaeaea;"></div>
<div style="left:1009.80px;top:198.60px;width:1.00px;height:16.00px;background:#eaeaea;"></div>
<div style="left:1057.30px;top:198.60px;width:1.00px;height:16.00px;background:#eaeaea;"></div>
<div style="left:1104.10px;top:198.60px;width:1.00px;height:16.00px;background:#eaeaea;"></div>
<span class="t" style="left:16.90px;top:201.95px;font-size:10.0px;line-height:11.490px;color:#474747;">2.1</span>
<span class="t" style="left:92.60px;top:201.95px;font-size:10.0px;line-height:11.490px;color:#1e1e1e;transform:scaleX(1.037);transform-origin:0 0;">Titles, metas, h1</span>
<span class="t" style="right:702.95px;top:201.95px;font-size:10.0px;line-height:11.490px;color:#1e1e1e;letter-spacing:0.45px;">10/3/2024</span>
<span class="t" style="right:621.75px;top:201.95px;font-size:10.0px;line-height:11.490px;color:#1e1e1e;letter-spacing:0.45px;">10/4/2024</span>
<span class="t" style="right:514.20px;top:201.95px;font-size:10.0px;line-height:11.490px;color:#1e1e1e;">0</span>
<span class="t" style="right:439.30px;top:201.95px;font-size:10.0px;line-height:11.490px;color:#1e1e1e;">16</span>
<span class="t" style="right:369.20px;top:201.95px;font-size:10.0px;line-height:11.490px;color:#1e1e1e;">0</span>
<span class="t" style="right:289.10px;top:201.95px;font-size:10.0px;line-height:11.490px;color:#1e1e1e;">0</span>
<span class="t" style="right:55.30px;top:201.95px;font-size:10.0px;line-height:11.490px;color:#1e1e1e;">0</span>
<span class="t" style="right:8.50px;top:201.95px;font-size:10.0px;line-height:11.490px;color:#1e1e1e;">0</span>
<span class="t" style="left:826.50px;top:201.95px;font-size:10.0px;line-height:11.490px;color:#1e1e1e;">Open</span>
<span class="t" style="left:886.30px;top:201.95px;font-size:10.0px;line-height:11.490px;color:#1e1e1e;transform:scaleX(1.06);transform-origin:0 0;">Medium</span>
<div style="left:0.00px;top:215.00px;width:14.50px;height:15.00px;background:#4cc3d3;"></div>
<div style="left:14.50px;top:229.40px;width:1095.50px;height:1.00px;background:#eaeaea;"></div>
<div style="left:72.80px;top:214.60px;width:1.00px;height:15.30px;background:#eaeaea;"></div>
<div style="left:89.10px;top:214.60px;width:1.00px;height:15.30px;background:#eaeaea;"></div>
<div style="left:268.20px;top:214.60px;width:1.00px;height:15.30px;background:#eaeaea;"></div>
<div style="left:327.10px;top:214.60px;width:1.00px;height:15.30px;background:#eaeaea;"></div>
<div style="left:408.80px;top:214.60px;width:1.00px;height:15.30px;background:#eaeaea;"></div>
<div style="left:490.00px;top:214.60px;width:1.00px;height:15.30px;background:#eaeaea;"></div>
<div style="left:537.80px;top:214.60px;width:1.00px;height:15.30px;background:#eaeaea;"></div>
<div style="left:597.80px;top:214.60px;width:1.00px;height:15.30px;background:#eaeaea;"></div>
<div style="left:672.70px;top:214.60px;width:1.00px;height:15.30px;background:#eaeaea;"></div>
<div style="left:742.80px;top:214.60px;width:1.00px;height:15.30px;background:#eaeaea;"></div>
<div style="left:822.90px;top:214.60px;width:1.00px;height:15.30px;background:#eaeaea;"></div>
<div style="left:882.80px;top:214.60px;width:1.00px;height:15.30px;background:#eaeaea;"></div>
<div style="left:942.50px;top:214.60px;width:1.00px;height:15.30px;background:#eaeaea;"></div>
<div style="left:1009.80px;top:214.60px;width:1.00px;height:15.30px;background:#eaeaea;"></div>
<div style="left:1057.30px;top:214.60px;width:1.00px;height:15.30px;background:#eaeaea;"></div>
<div style="left:1104.10px;top:214.60px;width:1.00px;height:15.30px;background:#eaeaea;"></div>
<span class="t" style="left:16.90px;top:217.95px;font-size:10.0px;line-height:11.490px;color:#474747;">2.2</span>
<span class="t" style="left:92.60px;top:217.95px;font-size:10.0px;line-height:11.490px;color:#1e1e1e;transform:scaleX(1.067);transform-origin:0 0;">Additional content descriptions</span>
<span class="t" style="right:702.95px;top:217.95px;font-size:10.0px;line-height:11.490px;color:#1e1e1e;letter-spacing:0.45px;">10/5/2024</span>
<span class="t" style="right:621.75px;top:217.95px;font-size:10.0px;line-height:11.490px;color:#1e1e1e;letter-spacing:0.45px;">10/7/2024</span>
<span class="t" style="right:514.20px;top:217.95px;font-size:10.0px;line-height:11.490px;color:#1e1e1e;">0</span>
<span class="t" style="right:439.30px;top:217.95px;font-size:10.0px;line-height:11.490px;color:#1e1e1e;">17</span>
<span class="t" style="right:369.20px;top:217.95px;font-size:10.0px;line-height:11.490px;color:#1e1e1e;">0</span>
<span class="t" style="right:289.10px;top:217.95px;font-size:10.0px;line-height:11.490px;color:#1e1e1e;">0</span>
<span class="t" style="right:55.30px;top:217.95px;font-size:10.0px;line-height:11.490px;color:#1e1e1e;">0</span>
<span class="t" style="right:8.50px;top:217.95px;font-size:10.0px;line-height:11.490px;color:#1e1e1e;">0</span>
<span class="t" style="left:826.50px;top:217.95px;font-size:10.0px;line-height:11.490px;color:#1e1e1e;">Open</span>
<span class="t" style="left:886.30px;top:217.95px;font-size:10.0px;line-height:11.490px;color:#1e1e1e;transform:scaleX(1.06);transform-origin:0 0;">Medium</span>
<div style="left:0.00px;top:230.00px;width:14.50px;height:15.00px;background:#84c486;"></div>
<div style="left:14.50px;top:244.70px;width:1095.50px;height:1.00px;background:#eaeaea;"></div>
<div style="left:72.80px;top:229.90px;width:1.00px;height:15.30px;background:#eaeaea;"></div>
<div style="left:89.10px;top:229.90px;width:1.00px;height:15.30px;background:#eaeaea;"></div>
<div style="left:268.20px;top:229.90px;width:1.00px;height:15.30px;background:#eaeaea;"></div>
<div style="left:327.10px;top:229.90px;width:1.00px;height:15.30px;background:#eaeaea;"></div>
<div style="left:408.80px;top:229.90px;width:1.00px;height:15.30px;background:#eaeaea;"></div>
<div style="left:490.00px;top:229.90px;width:1.00px;height:15.30px;background:#eaeaea;"></div>
<div style="left:537.80px;top:229.90px;width:1.00px;height:15.30px;background:#eaeaea;"></div>
<div style="left:597.80px;top:229.90px;width:1.00px;height:15.30px;background:#eaeaea;"></div>
<div style="left:672.70px;top:229.90px;width:1.00px;height:15.30px;background:#eaeaea;"></div>
<div style="left:742.80px;top:229.90px;width:1.00px;height:15.30px;background:#eaeaea;"></div>
<div style="left:822.90px;top:229.90px;width:1.00px;height:15.30px;background:#eaeaea;"></div>
<div style="left:882.80px;top:229.90px;width:1.00px;height:15.30px;background:#eaeaea;"></div>
<div style="left:942.50px;top:229.90px;width:1.00px;height:15.30px;background:#eaeaea;"></div>
<div style="left:1009.80px;top:229.90px;width:1.00px;height:15.30px;background:#eaeaea;"></div>
<div style="left:1057.30px;top:229.90px;width:1.00px;height:15.30px;background:#eaeaea;"></div>
<div style="left:1104.10px;top:229.90px;width:1.00px;height:15.30px;background:#eaeaea;"></div>
<span class="t" style="left:16.90px;top:233.25px;font-size:10.0px;line-height:11.490px;font-weight:bold;-webkit-text-stroke:0.05px currentColor;color:#141414;">2.3</span>
<span class="t" style="left:92.60px;top:233.25px;font-size:10.0px;line-height:11.490px;font-weight:bold;-webkit-text-stroke:0.05px currentColor;color:#141414;transform:scaleX(0.956);transform-origin:0 0;">Technical</span>
<span class="t" style="right:702.95px;top:233.25px;font-size:10.0px;line-height:11.490px;font-weight:bold;-webkit-text-stroke:0.05px currentColor;color:#141414;letter-spacing:0.45px;">10/7/2024</span>
<span class="t" style="right:621.75px;top:233.25px;font-size:10.0px;line-height:11.490px;font-weight:bold;-webkit-text-stroke:0.05px currentColor;color:#141414;letter-spacing:0.45px;">10/28/2024</span>
<span class="t" style="right:514.20px;top:233.25px;font-size:10.0px;line-height:11.490px;font-weight:bold;-webkit-text-stroke:0.05px currentColor;color:#141414;">0</span>
<span class="t" style="right:439.30px;top:233.25px;font-size:10.0px;line-height:11.490px;font-weight:bold;-webkit-text-stroke:0.05px currentColor;color:#141414;">128</span>
<span class="t" style="right:369.20px;top:233.25px;font-size:10.0px;line-height:11.490px;font-weight:bold;-webkit-text-stroke:0.05px currentColor;color:#141414;">0</span>
<span class="t" style="right:289.10px;top:233.25px;font-size:10.0px;line-height:11.490px;font-weight:bold;-webkit-text-stroke:0.05px currentColor;color:#141414;">0</span>
<span class="t" style="right:55.30px;top:233.25px;font-size:10.0px;line-height:11.490px;font-weight:bold;-webkit-text-stroke:0.05px currentColor;color:#141414;">0</span>
<span class="t" style="right:8.50px;top:233.25px;font-size:10.0px;line-height:11.490px;font-weight:bold;-webkit-text-stroke:0.05px currentColor;color:#141414;">0</span>
<div style="left:0.00px;top:245.00px;width:14.50px;height:16.00px;background:#4cc3d3;"></div>
<div style="left:14.50px;top:260.60px;width:1095.50px;height:1.00px;background:#eaeaea;"></div>
<div style="left:72.80px;top:245.20px;width:1.00px;height:15.90px;background:#eaeaea;"></div>
<div style="left:89.10px;top:245.20px;width:1.00px;height:15.90px;background:#eaeaea;"></div>
<div style="left:105.20px;top:245.20px;width:1.00px;height:15.90px;background:#eaeaea;"></div>
<div style="left:268.20px;top:245.20px;width:1.00px;height:15.90px;background:#eaeaea;"></div>
<div style="left:327.10px;top:245.20px;width:1.00px;height:15.90px;background:#eaeaea;"></div>
<div style="left:408.80px;top:245.20px;width:1.00px;height:15.90px;background:#eaeaea;"></div>
<div style="left:490.00px;top:245.20px;width:1.00px;height:15.90px;background:#eaeaea;"></div>
<div style="left:537.80px;top:245.20px;width:1.00px;height:15.90px;background:#eaeaea;"></div>
<div style="left:597.80px;top:245.20px;width:1.00px;height:15.90px;background:#eaeaea;"></div>
<div style="left:672.70px;top:245.20px;width:1.00px;height:15.90px;background:#eaeaea;"></div>
<div style="left:742.80px;top:245.20px;width:1.00px;height:15.90px;background:#eaeaea;"></div>
<div style="left:822.90px;top:245.20px;width:1.00px;height:15.90px;background:#eaeaea;"></div>
<div style="left:882.80px;top:245.20px;width:1.00px;height:15.90px;background:#eaeaea;"></div>
<div style="left:942.50px;top:245.20px;width:1.00px;height:15.90px;background:#eaeaea;"></div>
<div style="left:1009.80px;top:245.20px;width:1.00px;height:15.90px;background:#eaeaea;"></div>
<div style="left:1057.30px;top:245.20px;width:1.00px;height:15.90px;background:#eaeaea;"></div>
<div style="left:1104.10px;top:245.20px;width:1.00px;height:15.90px;background:#eaeaea;"></div>
<span class="t" style="left:16.90px;top:248.55px;font-size:10.0px;line-height:11.490px;color:#474747;">2.3.1</span>
<span class="t" style="left:108.80px;top:248.55px;font-size:10.0px;line-height:11.490px;color:#1e1e1e;transform:scaleX(1.034);transform-origin:0 0;">Competitors analysis</span>
<span class="t" style="right:702.95px;top:248.55px;font-size:10.0px;line-height:11.490px;color:#1e1e1e;letter-spacing:0.45px;">10/7/2024</span>
<span class="t" style="right:621.75px;top:248.55px;font-size:10.0px;line-height:11.490px;color:#1e1e1e;letter-spacing:0.45px;">10/10/2024</span>
<span class="t" style="right:514.20px;top:248.55px;font-size:10.0px;line-height:11.490px;color:#1e1e1e;">0</span>
<span class="t" style="right:439.30px;top:248.55px;font-size:10.0px;line-height:11.490px;color:#1e1e1e;">16</span>
<span class="t" style="right:369.20px;top:248.55px;font-size:10.0px;line-height:11.490px;color:#1e1e1e;">0</span>
<span class="t" style="right:289.10px;top:248.55px;font-size:10.0px;line-height:11.490px;color:#1e1e1e;">0</span>
<span class="t" style="right:55.30px;top:248.55px;font-size:10.0px;line-height:11.490px;color:#1e1e1e;">0</span>
<span class="t" style="right:8.50px;top:248.55px;font-size:10.0px;line-height:11.490px;color:#1e1e1e;">0</span>
<span class="t" style="left:826.50px;top:248.55px;font-size:10.0px;line-height:11.490px;color:#1e1e1e;">Open</span>
<span class="t" style="left:886.30px;top:248.55px;font-size:10.0px;line-height:11.490px;color:#1e1e1e;transform:scaleX(1.06);transform-origin:0 0;">Medium</span>
<div style="left:0.00px;top:261.00px;width:14.50px;height:15.00px;background:#4cc3d3;"></div>
<div style="left:14.50px;top:275.90px;width:1095.50px;height:1.00px;background:#eaeaea;"></div>
<div style="left:72.80px;top:261.10px;width:1.00px;height:15.30px;background:#eaeaea;"></div>
<div style="left:89.10px;top:261.10px;width:1.00px;height:15.30px;background:#eaeaea;"></div>
<div style="left:105.20px;top:261.10px;width:1.00px;height:15.30px;background:#eaeaea;"></div>
<div style="left:268.20px;top:261.10px;width:1.00px;height:15.30px;background:#eaeaea;"></div>
<div style="left:327.10px;top:261.10px;width:1.00px;height:15.30px;background:#eaeaea;"></div>
<div style="left:408.80px;top:261.10px;width:1.00px;height:15.30px;background:#eaeaea;"></div>
<div style="left:490.00px;top:261.10px;width:1.00px;height:15.30px;background:#eaeaea;"></div>
<div style="left:537.80px;top:261.10px;width:1.00px;height:15.30px;background:#eaeaea;"></div>
<div style="left:597.80px;top:261.10px;width:1.00px;height:15.30px;background:#eaeaea;"></div>
<div style="left:672.70px;top:261.10px;width:1.00px;height:15.30px;background:#eaeaea;"></div>
<div style="left:742.80px;top:261.10px;width:1.00px;height:15.30px;background:#eaeaea;"></div>
<div style="left:822.90px;top:261.10px;width:1.00px;height:15.30px;background:#eaeaea;"></div>
<div style="left:882.80px;top:261.10px;width:1.00px;height:15.30px;background:#eaeaea;"></div>
<div style="left:942.50px;top:261.10px;width:1.00px;height:15.30px;background:#eaeaea;"></div>
<div style="left:1009.80px;top:261.10px;width:1.00px;height:15.30px;background:#eaeaea;"></div>
<div style="left:1057.30px;top:261.10px;width:1.00px;height:15.30px;background:#eaeaea;"></div>
<div style="left:1104.10px;top:261.10px;width:1.00px;height:15.30px;background:#eaeaea;"></div>
<span class="t" style="left:16.90px;top:264.45px;font-size:10.0px;line-height:11.490px;color:#474747;">2.3.2</span>
<span class="t" style="left:108.80px;top:264.45px;font-size:10.0px;line-height:11.490px;color:#1e1e1e;transform:scaleX(1.035);transform-origin:0 0;">Doublicate page cleaning</span>
<span class="t" style="right:702.95px;top:264.45px;font-size:10.0px;line-height:11.490px;color:#1e1e1e;letter-spacing:0.45px;">10/11/2024</span>
<span class="t" style="right:621.75px;top:264.45px;font-size:10.0px;line-height:11.490px;color:#1e1e1e;letter-spacing:0.45px;">10/12/2024</span>
<span class="t" style="right:514.20px;top:264.45px;font-size:10.0px;line-height:11.490px;color:#1e1e1e;">0</span>
<span class="t" style="right:439.30px;top:264.45px;font-size:10.0px;line-height:11.490px;color:#1e1e1e;">16</span>
<span class="t" style="right:369.20px;top:264.45px;font-size:10.0px;line-height:11.490px;color:#1e1e1e;">0</span>
<span class="t" style="right:289.10px;top:264.45px;font-size:10.0px;line-height:11.490px;color:#1e1e1e;">0</span>
<span class="t" style="right:55.30px;top:264.45px;font-size:10.0px;line-height:11.490px;color:#1e1e1e;">0</span>
<span class="t" style="right:8.50px;top:264.45px;font-size:10.0px;line-height:11.490px;color:#1e1e1e;">0</span>
<span class="t" style="left:826.50px;top:264.45px;font-size:10.0px;line-height:11.490px;color:#1e1e1e;">Open</span>
<span class="t" style="left:886.30px;top:264.45px;font-size:10.0px;line-height:11.490px;color:#1e1e1e;transform:scaleX(1.06);transform-origin:0 0;">Medium</span>
<div style="left:0.00px;top:276.00px;width:14.50px;height:16.00px;background:#4cc3d3;"></div>
<div style="left:14.50px;top:291.20px;width:1095.50px;height:1.00px;background:#eaeaea;"></div>
<div style="left:72.80px;top:276.40px;width:1.00px;height:15.30px;background:#eaeaea;"></div>
<div style="left:89.10px;top:276.40px;width:1.00px;height:15.30px;background:#eaeaea;"></div>
<div style="left:105.20px;top:276.40px;width:1.00px;height:15.30px;background:#eaeaea;"></div>
<div style="left:268.20px;top:276.40px;width:1.00px;height:15.30px;background:#eaeaea;"></div>
<div style="left:327.10px;top:276.40px;width:1.00px;height:15.30px;background:#eaeaea;"></div>
<div style="left:408.80px;top:276.40px;width:1.00px;height:15.30px;background:#eaeaea;"></div>
<div style="left:490.00px;top:276.40px;width:1.00px;height:15.30px;background:#eaeaea;"></div>
<div style="left:537.80px;top:276.40px;width:1.00px;height:15.30px;background:#eaeaea;"></div>
<div style="left:597.80px;top:276.40px;width:1.00px;height:15.30px;background:#eaeaea;"></div>
<div style="left:672.70px;top:276.40px;width:1.00px;height:15.30px;background:#eaeaea;"></div>
<div style="left:742.80px;top:276.40px;width:1.00px;height:15.30px;background:#eaeaea;"></div>
<div style="left:822.90px;top:276.40px;width:1.00px;height:15.30px;background:#eaeaea;"></div>
<div style="left:882.80px;top:276.40px;width:1.00px;height:15.30px;background:#eaeaea;"></div>
<div style="left:942.50px;top:276.40px;width:1.00px;height:15.30px;background:#eaeaea;"></div>
<div style="left:1009.80px;top:276.40px;width:1.00px;height:15.30px;background:#eaeaea;"></div>
<div style="left:1057.30px;top:276.40px;width:1.00px;height:15.30px;background:#eaeaea;"></div>
<div style="left:1104.10px;top:276.40px;width:1.00px;height:15.30px;background:#eaeaea;"></div>
<span class="t" style="left:16.90px;top:279.75px;font-size:10.0px;line-height:11.490px;color:#474747;">2.3.3</span>
<span class="t" style="left:108.80px;top:279.75px;font-size:10.0px;line-height:11.490px;color:#1e1e1e;transform:scaleX(1.057);transform-origin:0 0;">Robots.txt</span>
<span class="t" style="right:702.95px;top:279.75px;font-size:10.0px;line-height:11.490px;color:#1e1e1e;letter-spacing:0.45px;">10/13/2024</span>
<span class="t" style="right:621.75px;top:279.75px;font-size:10.0px;line-height:11.490px;color:#1e1e1e;letter-spacing:0.45px;">10/14/2024</span>
<span class="t" style="right:514.20px;top:279.75px;font-size:10.0px;line-height:11.490px;color:#1e1e1e;">0</span>
<span class="t" style="right:439.30px;top:279.75px;font-size:10.0px;line-height:11.490px;color:#1e1e1e;">16</span>
<span class="t" style="right:369.20px;top:279.75px;font-size:10.0px;line-height:11.490px;color:#1e1e1e;">0</span>
<span class="t" style="right:289.10px;top:279.75px;font-size:10.0px;line-height:11.490px;color:#1e1e1e;">0</span>
<span class="t" style="right:55.30px;top:279.75px;font-size:10.0px;line-height:11.490px;color:#1e1e1e;">0</span>
<span class="t" style="right:8.50px;top:279.75px;font-size:10.0px;line-height:11.490px;color:#1e1e1e;">0</span>
<span class="t" style="left:826.50px;top:279.75px;font-size:10.0px;line-height:11.490px;color:#1e1e1e;">Open</span>
<span class="t" style="left:886.30px;top:279.75px;font-size:10.0px;line-height:11.490px;color:#1e1e1e;transform:scaleX(1.06);transform-origin:0 0;">Medium</span>
<div style="left:0.00px;top:292.00px;width:14.50px;height:16.00px;background:#4cc3d3;"></div>
<div style="left:14.50px;top:307.10px;width:1095.50px;height:1.00px;background:#eaeaea;"></div>
<div style="left:72.80px;top:291.70px;width:1.00px;height:15.90px;background:#eaeaea;"></div>
<div style="left:89.10px;top:291.70px;width:1.00px;height:15.90px;background:#eaeaea;"></div>
<div style="left:105.20px;top:291.70px;width:1.00px;height:15.90px;background:#eaeaea;"></div>
<div style="left:268.20px;top:291.70px;width:1.00px;height:15.90px;background:#eaeaea;"></div>
<div style="left:327.10px;top:291.70px;width:1.00px;height:15.90px;background:#eaeaea;"></div>
<div style="left:408.80px;top:291.70px;width:1.00px;height:15.90px;background:#eaeaea;"></div>
<div style="left:490.00px;top:291.70px;width:1.00px;height:15.90px;background:#eaeaea;"></div>
<div style="left:537.80px;top:291.70px;width:1.00px;height:15.90px;background:#eaeaea;"></div>
<div style="left:597.80px;top:291.70px;width:1.00px;height:15.90px;background:#eaeaea;"></div>
<div style="left:672.70px;top:291.70px;width:1.00px;height:15.90px;background:#eaeaea;"></div>
<div style="left:742.80px;top:291.70px;width:1.00px;height:15.90px;background:#eaeaea;"></div>
<div style="left:822.90px;top:291.70px;width:1.00px;height:15.90px;background:#eaeaea;"></div>
<div style="left:882.80px;top:291.70px;width:1.00px;height:15.90px;background:#eaeaea;"></div>
<div style="left:942.50px;top:291.70px;width:1.00px;height:15.90px;background:#eaeaea;"></div>
<div style="left:1009.80px;top:291.70px;width:1.00px;height:15.90px;background:#eaeaea;"></div>
<div style="left:1057.30px;top:291.70px;width:1.00px;height:15.90px;background:#eaeaea;"></div>
<div style="left:1104.10px;top:291.70px;width:1.00px;height:15.90px;background:#eaeaea;"></div>
<span class="t" style="left:16.90px;top:295.05px;font-size:10.0px;line-height:11.490px;color:#474747;">2.3.4</span>
<span class="t" style="left:108.80px;top:295.05px;font-size:10.0px;line-height:11.490px;color:#1e1e1e;transform:scaleX(1.042);transform-origin:0 0;">Canonization</span>
<span class="t" style="right:702.95px;top:295.05px;font-size:10.0px;line-height:11.490px;color:#1e1e1e;letter-spacing:0.45px;">10/17/2024</span>
<span class="t" style="right:621.75px;top:295.05px;font-size:10.0px;line-height:11.490px;color:#1e1e1e;letter-spacing:0.45px;">10/19/2024</span>
<span class="t" style="right:514.20px;top:295.05px;font-size:10.0px;line-height:11.490px;color:#1e1e1e;">0</span>
<span class="t" style="right:439.30px;top:295.05px;font-size:10.0px;line-height:11.490px;color:#1e1e1e;">17</span>
<span class="t" style="right:369.20px;top:295.05px;font-size:10.0px;line-height:11.490px;color:#1e1e1e;">0</span>
<span class="t" style="right:289.10px;top:295.05px;font-size:10.0px;line-height:11.490px;color:#1e1e1e;">0</span>
<span class="t" style="right:55.30px;top:295.05px;font-size:10.0px;line-height:11.490px;color:#1e1e1e;">0</span>
<span class="t" style="right:8.50px;top:295.05px;font-size:10.0px;line-height:11.490px;color:#1e1e1e;">0</span>
<span class="t" style="left:826.50px;top:295.05px;font-size:10.0px;line-height:11.490px;color:#1e1e1e;">Open</span>
<span class="t" style="left:886.30px;top:295.05px;font-size:10.0px;line-height:11.490px;color:#1e1e1e;transform:scaleX(1.06);transform-origin:0 0;">Medium</span>
<div style="left:0.00px;top:308.00px;width:14.50px;height:16.00px;background:#4cc3d3;"></div>
<div style="left:14.50px;top:323.10px;width:1095.50px;height:1.00px;background:#eaeaea;"></div>
<div style="left:72.80px;top:307.60px;width:1.00px;height:16.00px;background:#eaeaea;"></div>
<div style="left:89.10px;top:307.60px;width:1.00px;height:16.00px;background:#eaeaea;"></div>
<div style="left:105.20px;top:307.60px;width:1.00px;height:16.00px;background:#eaeaea;"></div>
<div style="left:268.20px;top:307.60px;width:1.00px;height:16.00px;background:#eaeaea;"></div>
<div style="left:327.10px;top:307.60px;width:1.00px;height:16.00px;background:#eaeaea;"></div>
<div style="left:408.80px;top:307.60px;width:1.00px;height:16.00px;background:#eaeaea;"></div>
<div style="left:490.00px;top:307.60px;width:1.00px;height:16.00px;background:#eaeaea;"></div>
<div style="left:537.80px;top:307.60px;width:1.00px;height:16.00px;background:#eaeaea;"></div>
<div style="left:597.80px;top:307.60px;width:1.00px;height:16.00px;background:#eaeaea;"></div>
<div style="left:672.70px;top:307.60px;width:1.00px;height:16.00px;background:#eaeaea;"></div>
<div style="left:742.80px;top:307.60px;width:1.00px;height:16.00px;background:#eaeaea;"></div>
<div style="left:822.90px;top:307.60px;width:1.00px;height:16.00px;background:#eaeaea;"></div>
<div style="left:882.80px;top:307.60px;width:1.00px;height:16.00px;background:#eaeaea;"></div>
<div style="left:942.50px;top:307.60px;width:1.00px;height:16.00px;background:#eaeaea;"></div>
<div style="left:1009.80px;top:307.60px;width:1.00px;height:16.00px;background:#eaeaea;"></div>
<div style="left:1057.30px;top:307.60px;width:1.00px;height:16.00px;background:#eaeaea;"></div>
<div style="left:1104.10px;top:307.60px;width:1.00px;height:16.00px;background:#eaeaea;"></div>
<span class="t" style="left:16.90px;top:310.95px;font-size:10.0px;line-height:11.490px;color:#474747;">2.3.5</span>
<span class="t" style="left:108.80px;top:310.95px;font-size:10.0px;line-height:11.490px;color:#1e1e1e;transform:scaleX(1.059);transform-origin:0 0;">Site structure</span>
<span class="t" style="right:702.95px;top:310.95px;font-size:10.0px;line-height:11.490px;color:#1e1e1e;letter-spacing:0.45px;">10/19/2024</span>
<span class="t" style="right:621.75px;top:310.95px;font-size:10.0px;line-height:11.490px;color:#1e1e1e;letter-spacing:0.45px;">10/21/2024</span>
<span class="t" style="right:514.20px;top:310.95px;font-size:10.0px;line-height:11.490px;color:#1e1e1e;">0</span>
<span class="t" style="right:439.30px;top:310.95px;font-size:10.0px;line-height:11.490px;color:#1e1e1e;">17</span>
<span class="t" style="right:369.20px;top:310.95px;font-size:10.0px;line-height:11.490px;color:#1e1e1e;">0</span>
<span class="t" style="right:289.10px;top:310.95px;font-size:10.0px;line-height:11.490px;color:#1e1e1e;">0</span>
<span class="t" style="right:55.30px;top:310.95px;font-size:10.0px;line-height:11.490px;color:#1e1e1e;">0</span>
<span class="t" style="right:8.50px;top:310.95px;font-size:10.0px;line-height:11.490px;color:#1e1e1e;">0</span>
<span class="t" style="left:826.50px;top:310.95px;font-size:10.0px;line-height:11.490px;color:#1e1e1e;">Open</span>
<span class="t" style="left:886.30px;top:310.95px;font-size:10.0px;line-height:11.490px;color:#1e1e1e;transform:scaleX(1.06);transform-origin:0 0;">Medium</span>
<div style="left:0.00px;top:324.00px;width:14.50px;height:16.00px;background:#4cc3d3;"></div>
<div style="left:14.50px;top:339.20px;width:1095.50px;height:1.00px;background:#eaeaea;"></div>
<div style="left:72.80px;top:323.60px;width:1.00px;height:16.10px;background:#eaeaea;"></div>
<div style="left:89.10px;top:323.60px;width:1.00px;height:16.10px;background:#eaeaea;"></div>
<div style="left:105.20px;top:323.60px;width:1.00px;height:16.10px;background:#eaeaea;"></div>
<div style="left:268.20px;top:323.60px;width:1.00px;height:16.10px;background:#eaeaea;"></div>
<div style="left:327.10px;top:323.60px;width:1.00px;height:16.10px;background:#eaeaea;"></div>
<div style="left:408.80px;top:323.60px;width:1.00px;height:16.10px;background:#eaeaea;"></div>
<div style="left:490.00px;top:323.60px;width:1.00px;height:16.10px;background:#eaeaea;"></div>
<div style="left:537.80px;top:323.60px;width:1.00px;height:16.10px;background:#eaeaea;"></div>
<div style="left:597.80px;top:323.60px;width:1.00px;height:16.10px;background:#eaeaea;"></div>
<div style="left:672.70px;top:323.60px;width:1.00px;height:16.10px;background:#eaeaea;"></div>
<div style="left:742.80px;top:323.60px;width:1.00px;height:16.10px;background:#eaeaea;"></div>
<div style="left:822.90px;top:323.60px;width:1.00px;height:16.10px;background:#eaeaea;"></div>
<div style="left:882.80px;top:323.60px;width:1.00px;height:16.10px;background:#eaeaea;"></div>
<div style="left:942.50px;top:323.60px;width:1.00px;height:16.10px;background:#eaeaea;"></div>
<div style="left:1009.80px;top:323.60px;width:1.00px;height:16.10px;background:#eaeaea;"></div>
<div style="left:1057.30px;top:323.60px;width:1.00px;height:16.10px;background:#eaeaea;"></div>
<div style="left:1104.10px;top:323.60px;width:1.00px;height:16.10px;background:#eaeaea;"></div>
<span class="t" style="left:16.90px;top:326.95px;font-size:10.0px;line-height:11.490px;color:#474747;">2.3.6</span>
<span class="t" style="left:108.80px;top:326.95px;font-size:10.0px;line-height:11.490px;color:#1e1e1e;transform:scaleX(0.998);transform-origin:0 0;">Site speed</span>
<span class="t" style="right:702.95px;top:326.95px;font-size:10.0px;line-height:11.490px;color:#1e1e1e;letter-spacing:0.45px;">10/21/2024</span>
<span class="t" style="right:621.75px;top:326.95px;font-size:10.0px;line-height:11.490px;color:#1e1e1e;letter-spacing:0.45px;">10/24/2024</span>
<span class="t" style="right:514.20px;top:326.95px;font-size:10.0px;line-height:11.490px;color:#1e1e1e;">0</span>
<span class="t" style="right:439.30px;top:326.95px;font-size:10.0px;line-height:11.490px;color:#1e1e1e;">16</span>
<span class="t" style="right:369.20px;top:326.95px;font-size:10.0px;line-height:11.490px;color:#1e1e1e;">0</span>
<span class="t" style="right:289.10px;top:326.95px;font-size:10.0px;line-height:11.490px;color:#1e1e1e;">0</span>
<span class="t" style="right:55.30px;top:326.95px;font-size:10.0px;line-height:11.490px;color:#1e1e1e;">0</span>
<span class="t" style="right:8.50px;top:326.95px;font-size:10.0px;line-height:11.490px;color:#1e1e1e;">0</span>
<span class="t" style="left:826.50px;top:326.95px;font-size:10.0px;line-height:11.490px;color:#1e1e1e;">Open</span>
<span class="t" style="left:886.30px;top:326.95px;font-size:10.0px;line-height:11.490px;color:#1e1e1e;transform:scaleX(1.06);transform-origin:0 0;">Medium</span>
<div style="left:0.00px;top:340.00px;width:14.50px;height:16.00px;background:#4cc3d3;"></div>
<div style="left:14.50px;top:355.10px;width:1095.50px;height:1.00px;background:#eaeaea;"></div>
<div style="left:72.80px;top:339.70px;width:1.00px;height:15.90px;background:#eaeaea;"></div>
<div style="left:89.10px;top:339.70px;width:1.00px;height:15.90px;background:#eaeaea;"></div>
<div style="left:105.20px;top:339.70px;width:1.00px;height:15.90px;background:#eaeaea;"></div>
<div style="left:268.20px;top:339.70px;width:1.00px;height:15.90px;background:#eaeaea;"></div>
<div style="left:327.10px;top:339.70px;width:1.00px;height:15.90px;background:#eaeaea;"></div>
<div style="left:408.80px;top:339.70px;width:1.00px;height:15.90px;background:#eaeaea;"></div>
<div style="left:490.00px;top:339.70px;width:1.00px;height:15.90px;background:#eaeaea;"></div>
<div style="left:537.80px;top:339.70px;width:1.00px;height:15.90px;background:#eaeaea;"></div>
<div style="left:597.80px;top:339.70px;width:1.00px;height:15.90px;background:#eaeaea;"></div>
<div style="left:672.70px;top:339.70px;width:1.00px;height:15.90px;background:#eaeaea;"></div>
<div style="left:742.80px;top:339.70px;width:1.00px;height:15.90px;background:#eaeaea;"></div>
<div style="left:822.90px;top:339.70px;width:1.00px;height:15.90px;background:#eaeaea;"></div>
<div style="left:882.80px;top:339.70px;width:1.00px;height:15.90px;background:#eaeaea;"></div>
<div style="left:942.50px;top:339.70px;width:1.00px;height:15.90px;background:#eaeaea;"></div>
<div style="left:1009.80px;top:339.70px;width:1.00px;height:15.90px;background:#eaeaea;"></div>
<div style="left:1057.30px;top:339.70px;width:1.00px;height:15.90px;background:#eaeaea;"></div>
<div style="left:1104.10px;top:339.70px;width:1.00px;height:15.90px;background:#eaeaea;"></div>
<span class="t" style="left:16.90px;top:343.05px;font-size:10.0px;line-height:11.490px;color:#474747;">2.3.7</span>
<span class="t" style="left:108.80px;top:343.05px;font-size:10.0px;line-height:11.490px;color:#1e1e1e;transform:scaleX(1.103);transform-origin:0 0;">Mobile-friendly optimization</span>
<span class="t" style="right:702.95px;top:343.05px;font-size:10.0px;line-height:11.490px;color:#1e1e1e;letter-spacing:0.45px;">10/25/2024</span>
<span class="t" style="right:621.75px;top:343.05px;font-size:10.0px;line-height:11.490px;color:#1e1e1e;letter-spacing:0.45px;">10/26/2024</span>
<span class="t" style="right:514.20px;top:343.05px;font-size:10.0px;line-height:11.490px;color:#1e1e1e;">0</span>
<span class="t" style="right:439.30px;top:343.05px;font-size:10.0px;line-height:11.490px;color:#1e1e1e;">16</span>
<span class="t" style="right:369.20px;top:343.05px;font-size:10.0px;line-height:11.490px;color:#1e1e1e;">0</span>
<span class="t" style="right:289.10px;top:343.05px;font-size:10.0px;line-height:11.490px;color:#1e1e1e;">0</span>
<span class="t" style="right:55.30px;top:343.05px;font-size:10.0px;line-height:11.490px;color:#1e1e1e;">0</span>
<span class="t" style="right:8.50px;top:343.05px;font-size:10.0px;line-height:11.490px;color:#1e1e1e;">0</span>
<span class="t" style="left:826.50px;top:343.05px;font-size:10.0px;line-height:11.490px;color:#1e1e1e;">Open</span>
<span class="t" style="left:886.30px;top:343.05px;font-size:10.0px;line-height:11.490px;color:#1e1e1e;transform:scaleX(1.06);transform-origin:0 0;">Medium</span>
<div style="left:0.00px;top:356.00px;width:14.50px;height:16.00px;background:#4cc3d3;"></div>
<div style="left:14.50px;top:371.60px;width:1095.50px;height:1.00px;background:#eaeaea;"></div>
<div style="left:72.80px;top:355.60px;width:1.00px;height:16.50px;background:#eaeaea;"></div>
<div style="left:89.10px;top:355.60px;width:1.00px;height:16.50px;background:#eaeaea;"></div>
<div style="left:105.20px;top:355.60px;width:1.00px;height:16.50px;background:#eaeaea;"></div>
<div style="left:327.10px;top:355.60px;width:1.00px;height:16.50px;background:#eaeaea;"></div>
<div style="left:408.80px;top:355.60px;width:1.00px;height:16.50px;background:#eaeaea;"></div>
<div style="left:490.00px;top:355.60px;width:1.00px;height:16.50px;background:#eaeaea;"></div>
<div style="left:537.80px;top:355.60px;width:1.00px;height:16.50px;background:#eaeaea;"></div>
<div style="left:597.80px;top:355.60px;width:1.00px;height:16.50px;background:#eaeaea;"></div>
<div style="left:672.70px;top:355.60px;width:1.00px;height:16.50px;background:#eaeaea;"></div>
<div style="left:742.80px;top:355.60px;width:1.00px;height:16.50px;background:#eaeaea;"></div>
<div style="left:822.90px;top:355.60px;width:1.00px;height:16.50px;background:#eaeaea;"></div>
<div style="left:882.80px;top:355.60px;width:1.00px;height:16.50px;background:#eaeaea;"></div>
<div style="left:942.50px;top:355.60px;width:1.00px;height:16.50px;background:#eaeaea;"></div>
<div style="left:1009.80px;top:355.60px;width:1.00px;height:16.50px;background:#eaeaea;"></div>
<div style="left:1057.30px;top:355.60px;width:1.00px;height:16.50px;background:#eaeaea;"></div>
<div style="left:1104.10px;top:355.60px;width:1.00px;height:16.50px;background:#eaeaea;"></div>
<span class="t" style="left:16.90px;top:358.95px;font-size:10.0px;line-height:11.490px;color:#474747;">2.3.8</span>
<span class="t" style="left:108.80px;top:358.95px;font-size:10.0px;line-height:11.490px;color:#1e1e1e;transform:scaleX(1.031);transform-origin:0 0;">Google analytics + webmaster tools</span>
<span class="t" style="right:702.95px;top:358.95px;font-size:10.0px;line-height:11.490px;color:#1e1e1e;letter-spacing:0.45px;">10/27/2024</span>
<span class="t" style="right:621.75px;top:358.95px;font-size:10.0px;line-height:11.490px;color:#1e1e1e;letter-spacing:0.45px;">10/28/2024</span>
<span class="t" style="right:514.20px;top:358.95px;font-size:10.0px;line-height:11.490px;color:#1e1e1e;">0</span>
<span class="t" style="right:439.30px;top:358.95px;font-size:10.0px;line-height:11.490px;color:#1e1e1e;">16</span>
<span class="t" style="right:369.20px;top:358.95px;font-size:10.0px;line-height:11.490px;color:#1e1e1e;">0</span>
<span class="t" style="right:289.10px;top:358.95px;font-size:10.0px;line-height:11.490px;color:#1e1e1e;">0</span>
<span class="t" style="right:55.30px;top:358.95px;font-size:10.0px;line-height:11.490px;color:#1e1e1e;">0</span>
<span class="t" style="right:8.50px;top:358.95px;font-size:10.0px;line-height:11.490px;color:#1e1e1e;">0</span>
<span class="t" style="left:826.50px;top:358.95px;font-size:10.0px;line-height:11.490px;color:#1e1e1e;">Open</span>
<span class="t" style="left:886.30px;top:358.95px;font-size:10.0px;line-height:11.490px;color:#1e1e1e;transform:scaleX(1.06);transform-origin:0 0;">Medium</span>
<div style="left:0.00px;top:372.00px;width:14.50px;height:16.00px;background:#4cc3d3;"></div>
<div style="left:14.50px;top:388.00px;width:1095.50px;height:1.00px;background:#eaeaea;"></div>
<div style="left:72.80px;top:372.10px;width:1.00px;height:16.40px;background:#eaeaea;"></div>
<div style="left:89.10px;top:372.10px;width:1.00px;height:16.40px;background:#eaeaea;"></div>
<div style="left:268.20px;top:372.10px;width:1.00px;height:16.40px;background:#eaeaea;"></div>
<div style="left:327.10px;top:372.10px;width:1.00px;height:16.40px;background:#eaeaea;"></div>
<div style="left:408.80px;top:372.10px;width:1.00px;height:16.40px;background:#eaeaea;"></div>
<div style="left:490.00px;top:372.10px;width:1.00px;height:16.40px;background:#eaeaea;"></div>
<div style="left:537.80px;top:372.10px;width:1.00px;height:16.40px;background:#eaeaea;"></div>
<div style="left:597.80px;top:372.10px;width:1.00px;height:16.40px;background:#eaeaea;"></div>
<div style="left:672.70px;top:372.10px;width:1.00px;height:16.40px;background:#eaeaea;"></div>
<div style="left:742.80px;top:372.10px;width:1.00px;height:16.40px;background:#eaeaea;"></div>
<div style="left:822.90px;top:372.10px;width:1.00px;height:16.40px;background:#eaeaea;"></div>
<div style="left:882.80px;top:372.10px;width:1.00px;height:16.40px;background:#eaeaea;"></div>
<div style="left:942.50px;top:372.10px;width:1.00px;height:16.40px;background:#eaeaea;"></div>
<div style="left:1009.80px;top:372.10px;width:1.00px;height:16.40px;background:#eaeaea;"></div>
<div style="left:1057.30px;top:372.10px;width:1.00px;height:16.40px;background:#eaeaea;"></div>
<div style="left:1104.10px;top:372.10px;width:1.00px;height:16.40px;background:#eaeaea;"></div>
<span class="t" style="left:16.90px;top:375.45px;font-size:10.0px;line-height:11.490px;color:#474747;">2.4</span>
<span class="t" style="left:92.60px;top:375.45px;font-size:10.0px;line-height:11.490px;color:#1e1e1e;transform:scaleX(1.061);transform-origin:0 0;">Internal linking, anchoring</span>
<span class="t" style="right:702.95px;top:375.45px;font-size:10.0px;line-height:11.490px;color:#1e1e1e;letter-spacing:0.45px;">10/3/2024</span>
<span class="t" style="right:621.75px;top:375.45px;font-size:10.0px;line-height:11.490px;color:#1e1e1e;letter-spacing:0.45px;">10/7/2024</span>
<span class="t" style="right:514.20px;top:375.45px;font-size:10.0px;line-height:11.490px;color:#1e1e1e;">0</span>
<span class="t" style="right:439.30px;top:375.45px;font-size:10.0px;line-height:11.490px;color:#1e1e1e;">40</span>
<span class="t" style="right:369.20px;top:375.45px;font-size:10.0px;line-height:11.490px;color:#1e1e1e;">0</span>
<span class="t" style="right:289.10px;top:375.45px;font-size:10.0px;line-height:11.490px;color:#1e1e1e;">0</span>
<span class="t" style="right:55.30px;top:375.45px;font-size:10.0px;line-height:11.490px;color:#1e1e1e;">0</span>
<span class="t" style="right:8.50px;top:375.45px;font-size:10.0px;line-height:11.490px;color:#1e1e1e;">0</span>
<span class="t" style="left:826.50px;top:375.45px;font-size:10.0px;line-height:11.490px;color:#1e1e1e;">Open</span>
<span class="t" style="left:886.30px;top:375.45px;font-size:10.0px;line-height:11.490px;color:#1e1e1e;transform:scaleX(1.06);transform-origin:0 0;">Medium</span>
<div style="left:0.00px;top:388.00px;width:14.50px;height:16.00px;background:#4cc3d3;"></div>
<div style="left:14.50px;top:403.90px;width:1095.50px;height:1.00px;background:#eaeaea;"></div>
<div style="left:72.80px;top:388.50px;width:1.00px;height:15.90px;background:#eaeaea;"></div>
<div style="left:89.10px;top:388.50px;width:1.00px;height:15.90px;background:#eaeaea;"></div>
<div style="left:268.20px;top:388.50px;width:1.00px;height:15.90px;background:#eaeaea;"></div>
<div style="left:327.10px;top:388.50px;width:1.00px;height:15.90px;background:#eaeaea;"></div>
<div style="left:408.80px;top:388.50px;width:1.00px;height:15.90px;background:#eaeaea;"></div>
<div style="left:490.00px;top:388.50px;width:1.00px;height:15.90px;background:#eaeaea;"></div>
<div style="left:537.80px;top:388.50px;width:1.00px;height:15.90px;background:#eaeaea;"></div>
<div style="left:597.80px;top:388.50px;width:1.00px;height:15.90px;background:#eaeaea;"></div>
<div style="left:672.70px;top:388.50px;width:1.00px;height:15.90px;background:#eaeaea;"></div>
<div style="left:742.80px;top:388.50px;width:1.00px;height:15.90px;background:#eaeaea;"></div>
<div style="left:822.90px;top:388.50px;width:1.00px;height:15.90px;background:#eaeaea;"></div>
<div style="left:882.80px;top:388.50px;width:1.00px;height:15.90px;background:#eaeaea;"></div>
<div style="left:942.50px;top:388.50px;width:1.00px;height:15.90px;background:#eaeaea;"></div>
<div style="left:1009.80px;top:388.50px;width:1.00px;height:15.90px;background:#eaeaea;"></div>
<div style="left:1057.30px;top:388.50px;width:1.00px;height:15.90px;background:#eaeaea;"></div>
<div style="left:1104.10px;top:388.50px;width:1.00px;height:15.90px;background:#eaeaea;"></div>
<span class="t" style="left:16.90px;top:391.85px;font-size:10.0px;line-height:11.490px;color:#474747;">2.5</span>
<span class="t" style="left:92.60px;top:391.85px;font-size:10.0px;line-height:11.490px;color:#1e1e1e;transform:scaleX(1.044);transform-origin:0 0;">Local optimization (local domains)</span>
<span class="t" style="right:702.95px;top:391.85px;font-size:10.0px;line-height:11.490px;color:#1e1e1e;letter-spacing:0.45px;">10/10/2024</span>
<span class="t" style="right:621.75px;top:391.85px;font-size:10.0px;line-height:11.490px;color:#1e1e1e;letter-spacing:0.45px;">10/14/2024</span>
<span class="t" style="right:514.20px;top:391.85px;font-size:10.0px;line-height:11.490px;color:#1e1e1e;">0</span>
<span class="t" style="right:439.30px;top:391.85px;font-size:10.0px;line-height:11.490px;color:#1e1e1e;">40</span>
<span class="t" style="right:369.20px;top:391.85px;font-size:10.0px;line-height:11.490px;color:#1e1e1e;">0</span>
<span class="t" style="right:289.10px;top:391.85px;font-size:10.0px;line-height:11.490px;color:#1e1e1e;">0</span>
<span class="t" style="right:55.30px;top:391.85px;font-size:10.0px;line-height:11.490px;color:#1e1e1e;">0</span>
<span class="t" style="right:8.50px;top:391.85px;font-size:10.0px;line-height:11.490px;color:#1e1e1e;">0</span>
<span class="t" style="left:826.50px;top:391.85px;font-size:10.0px;line-height:11.490px;color:#1e1e1e;">Open</span>
<span class="t" style="left:886.30px;top:391.85px;font-size:10.0px;line-height:11.490px;color:#1e1e1e;transform:scaleX(1.06);transform-origin:0 0;">Medium</span>
<div style="left:0.00px;top:404.00px;width:14.50px;height:16.00px;background:#f9c57f;"></div>
<div style="left:14.50px;top:420.00px;width:1095.50px;height:1.00px;background:#eaeaea;"></div>
<div style="left:72.80px;top:404.40px;width:1.00px;height:16.10px;background:#eaeaea;"></div>
<div style="left:268.20px;top:404.40px;width:1.00px;height:16.10px;background:#eaeaea;"></div>
<div style="left:327.10px;top:404.40px;width:1.00px;height:16.10px;background:#eaeaea;"></div>
<div style="left:408.80px;top:404.40px;width:1.00px;height:16.10px;background:#eaeaea;"></div>
<div style="left:490.00px;top:404.40px;width:1.00px;height:16.10px;background:#eaeaea;"></div>
<div style="left:537.80px;top:404.40px;width:1.00px;height:16.10px;background:#eaeaea;"></div>
<div style="left:597.80px;top:404.40px;width:1.00px;height:16.10px;background:#eaeaea;"></div>
<div style="left:672.70px;top:404.40px;width:1.00px;height:16.10px;background:#eaeaea;"></div>
<div style="left:742.80px;top:404.40px;width:1.00px;height:16.10px;background:#eaeaea;"></div>
<div style="left:822.90px;top:404.40px;width:1.00px;height:16.10px;background:#eaeaea;"></div>
<div style="left:882.80px;top:404.40px;width:1.00px;height:16.10px;background:#eaeaea;"></div>
<div style="left:942.50px;top:404.40px;width:1.00px;height:16.10px;background:#eaeaea;"></div>
<div style="left:1009.80px;top:404.40px;width:1.00px;height:16.10px;background:#eaeaea;"></div>
<div style="left:1057.30px;top:404.40px;width:1.00px;height:16.10px;background:#eaeaea;"></div>
<div style="left:1104.10px;top:404.40px;width:1.00px;height:16.10px;background:#eaeaea;"></div>
<span class="t" style="left:16.90px;top:407.75px;font-size:10.0px;line-height:11.490px;font-weight:bold;-webkit-text-stroke:0.05px currentColor;color:#141414;">3</span>
<span class="t" style="left:76.70px;top:407.75px;font-size:10.0px;line-height:11.490px;font-weight:bold;-webkit-text-stroke:0.05px currentColor;color:#141414;transform:scaleX(0.968);transform-origin:0 0;">Content</span>
<span class="t" style="right:702.95px;top:407.75px;font-size:10.0px;line-height:11.490px;font-weight:bold;-webkit-text-stroke:0.05px currentColor;color:#141414;letter-spacing:0.45px;">10/3/2024</span>
<span class="t" style="right:621.75px;top:407.75px;font-size:10.0px;line-height:11.490px;font-weight:bold;-webkit-text-stroke:0.05px currentColor;color:#141414;letter-spacing:0.45px;">11/4/2024</span>
<span class="t" style="right:514.20px;top:407.75px;font-size:10.0px;line-height:11.490px;font-weight:bold;-webkit-text-stroke:0.05px currentColor;color:#141414;">0</span>
<span class="t" style="right:439.30px;top:407.75px;font-size:10.0px;line-height:11.490px;font-weight:bold;-webkit-text-stroke:0.05px currentColor;color:#141414;">200</span>
<span class="t" style="right:369.20px;top:407.75px;font-size:10.0px;line-height:11.490px;font-weight:bold;-webkit-text-stroke:0.05px currentColor;color:#141414;">0</span>
<span class="t" style="right:289.10px;top:407.75px;font-size:10.0px;line-height:11.490px;font-weight:bold;-webkit-text-stroke:0.05px currentColor;color:#141414;">0</span>
<span class="t" style="right:55.30px;top:407.75px;font-size:10.0px;line-height:11.490px;font-weight:bold;-webkit-text-stroke:0.05px currentColor;color:#141414;">0</span>
<span class="t" style="right:8.50px;top:407.75px;font-size:10.0px;line-height:11.490px;font-weight:bold;-webkit-text-stroke:0.05px currentColor;color:#141414;">0</span>
<div style="left:0.00px;top:420.00px;width:14.50px;height:17.00px;background:#4cc3d3;"></div>
<div style="left:14.50px;top:436.20px;width:1095.50px;height:1.00px;background:#eaeaea;"></div>
<div style="left:72.80px;top:420.50px;width:1.00px;height:16.20px;background:#eaeaea;"></div>
<div style="left:89.10px;top:420.50px;width:1.00px;height:16.20px;background:#eaeaea;"></div>
<div style="left:268.20px;top:420.50px;width:1.00px;height:16.20px;background:#eaeaea;"></div>
<div style="left:327.10px;top:420.50px;width:1.00px;height:16.20px;background:#eaeaea;"></div>
<div style="left:408.80px;top:420.50px;width:1.00px;height:16.20px;background:#eaeaea;"></div>
<div style="left:490.00px;top:420.50px;width:1.00px;height:16.20px;background:#eaeaea;"></div>
<div style="left:537.80px;top:420.50px;width:1.00px;height:16.20px;background:#eaeaea;"></div>
<div style="left:597.80px;top:420.50px;width:1.00px;height:16.20px;background:#eaeaea;"></div>
<div style="left:672.70px;top:420.50px;width:1.00px;height:16.20px;background:#eaeaea;"></div>
<div style="left:742.80px;top:420.50px;width:1.00px;height:16.20px;background:#eaeaea;"></div>
<div style="left:822.90px;top:420.50px;width:1.00px;height:16.20px;background:#eaeaea;"></div>
<div style="left:882.80px;top:420.50px;width:1.00px;height:16.20px;background:#eaeaea;"></div>
<div style="left:942.50px;top:420.50px;width:1.00px;height:16.20px;background:#eaeaea;"></div>
<div style="left:1009.80px;top:420.50px;width:1.00px;height:16.20px;background:#eaeaea;"></div>
<div style="left:1057.30px;top:420.50px;width:1.00px;height:16.20px;background:#eaeaea;"></div>
<div style="left:1104.10px;top:420.50px;width:1.00px;height:16.20px;background:#eaeaea;"></div>
<span class="t" style="left:16.90px;top:423.85px;font-size:10.0px;line-height:11.490px;color:#474747;">3.1</span>
<span class="t" style="left:92.60px;top:423.85px;font-size:10.0px;line-height:11.490px;color:#1e1e1e;transform:scaleX(1.034);transform-origin:0 0;">Keyword research</span>
<span class="t" style="right:702.95px;top:423.85px;font-size:10.0px;line-height:11.490px;color:#1e1e1e;letter-spacing:0.45px;">10/3/2024</span>
<span class="t" style="right:621.75px;top:423.85px;font-size:10.0px;line-height:11.490px;color:#1e1e1e;letter-spacing:0.45px;">10/7/2024</span>
<span class="t" style="right:514.20px;top:423.85px;font-size:10.0px;line-height:11.490px;color:#1e1e1e;">0</span>
<span class="t" style="right:439.30px;top:423.85px;font-size:10.0px;line-height:11.490px;color:#1e1e1e;">40</span>
<span class="t" style="right:369.20px;top:423.85px;font-size:10.0px;line-height:11.490px;color:#1e1e1e;">0</span>
<span class="t" style="right:289.10px;top:423.85px;font-size:10.0px;line-height:11.490px;color:#1e1e1e;">0</span>
<span class="t" style="right:55.30px;top:423.85px;font-size:10.0px;line-height:11.490px;color:#1e1e1e;">0</span>
<span class="t" style="right:8.50px;top:423.85px;font-size:10.0px;line-height:11.490px;color:#1e1e1e;">0</span>
<span class="t" style="left:826.50px;top:423.85px;font-size:10.0px;line-height:11.490px;color:#1e1e1e;">Open</span>
<span class="t" style="left:886.30px;top:423.85px;font-size:10.0px;line-height:11.490px;color:#1e1e1e;transform:scaleX(1.06);transform-origin:0 0;">Medium</span>
<div style="left:0.00px;top:437.00px;width:14.50px;height:16.00px;background:#4cc3d3;"></div>
<div style="left:14.50px;top:452.60px;width:1095.50px;height:1.00px;background:#eaeaea;"></div>
<div style="left:72.80px;top:436.70px;width:1.00px;height:16.40px;background:#eaeaea;"></div>
<div style="left:89.10px;top:436.70px;width:1.00px;height:16.40px;background:#eaeaea;"></div>
<div style="left:268.20px;top:436.70px;width:1.00px;height:16.40px;background:#eaeaea;"></div>
<div style="left:327.10px;top:436.70px;width:1.00px;height:16.40px;background:#eaeaea;"></div>
<div style="left:408.80px;top:436.70px;width:1.00px;height:16.40px;background:#eaeaea;"></div>
<div style="left:490.00px;top:436.70px;width:1.00px;height:16.40px;background:#eaeaea;"></div>
<div style="left:537.80px;top:436.70px;width:1.00px;height:16.40px;background:#eaeaea;"></div>
<div style="left:597.80px;top:436.70px;width:1.00px;height:16.40px;background:#eaeaea;"></div>
<div style="left:672.70px;top:436.70px;width:1.00px;height:16.40px;background:#eaeaea;"></div>
<div style="left:742.80px;top:436.70px;width:1.00px;height:16.40px;background:#eaeaea;"></div>
<div style="left:822.90px;top:436.70px;width:1.00px;height:16.40px;background:#eaeaea;"></div>
<div style="left:882.80px;top:436.70px;width:1.00px;height:16.40px;background:#eaeaea;"></div>
<div style="left:942.50px;top:436.70px;width:1.00px;height:16.40px;background:#eaeaea;"></div>
<div style="left:1009.80px;top:436.70px;width:1.00px;height:16.40px;background:#eaeaea;"></div>
<div style="left:1057.30px;top:436.70px;width:1.00px;height:16.40px;background:#eaeaea;"></div>
<div style="left:1104.10px;top:436.70px;width:1.00px;height:16.40px;background:#eaeaea;"></div>
<span class="t" style="left:16.90px;top:440.05px;font-size:10.0px;line-height:11.490px;color:#474747;">3.2</span>
<span class="t" style="left:92.60px;top:440.05px;font-size:10.0px;line-height:11.490px;color:#1e1e1e;transform:scaleX(1.043);transform-origin:0 0;">Landing page optimization (kws, etc)</span>
<span class="t" style="right:702.95px;top:440.05px;font-size:10.0px;line-height:11.490px;color:#1e1e1e;letter-spacing:0.45px;">10/10/2024</span>
<span class="t" style="right:621.75px;top:440.05px;font-size:10.0px;line-height:11.490px;color:#1e1e1e;letter-spacing:0.45px;">10/14/2024</span>
<span class="t" style="right:514.20px;top:440.05px;font-size:10.0px;line-height:11.490px;color:#1e1e1e;">0</span>
<span class="t" style="right:439.30px;top:440.05px;font-size:10.0px;line-height:11.490px;color:#1e1e1e;">40</span>
<span class="t" style="right:369.20px;top:440.05px;font-size:10.0px;line-height:11.490px;color:#1e1e1e;">0</span>
<span class="t" style="right:289.10px;top:440.05px;font-size:10.0px;line-height:11.490px;color:#1e1e1e;">0</span>
<span class="t" style="right:55.30px;top:440.05px;font-size:10.0px;line-height:11.490px;color:#1e1e1e;">0</span>
<span class="t" style="right:8.50px;top:440.05px;font-size:10.0px;line-height:11.490px;color:#1e1e1e;">0</span>
<span class="t" style="left:826.50px;top:440.05px;font-size:10.0px;line-height:11.490px;color:#1e1e1e;">Open</span>
<span class="t" style="left:886.30px;top:440.05px;font-size:10.0px;line-height:11.490px;color:#1e1e1e;transform:scaleX(1.06);transform-origin:0 0;">Medium</span>
<div style="left:0.00px;top:453.00px;width:14.50px;height:16.00px;background:#4cc3d3;"></div>
<div style="left:14.50px;top:468.70px;width:1095.50px;height:1.00px;background:#eaeaea;"></div>
<div style="left:72.80px;top:453.10px;width:1.00px;height:16.10px;background:#eaeaea;"></div>
<div style="left:89.10px;top:453.10px;width:1.00px;height:16.10px;background:#eaeaea;"></div>
<div style="left:268.20px;top:453.10px;width:1.00px;height:16.10px;background:#eaeaea;"></div>
<div style="left:327.10px;top:453.10px;width:1.00px;height:16.10px;background:#eaeaea;"></div>
<div style="left:408.80px;top:453.10px;width:1.00px;height:16.10px;background:#eaeaea;"></div>
<div style="left:490.00px;top:453.10px;width:1.00px;height:16.10px;background:#eaeaea;"></div>
<div style="left:537.80px;top:453.10px;width:1.00px;height:16.10px;background:#eaeaea;"></div>
<div style="left:597.80px;top:453.10px;width:1.00px;height:16.10px;background:#eaeaea;"></div>
<div style="left:672.70px;top:453.10px;width:1.00px;height:16.10px;background:#eaeaea;"></div>
<div style="left:742.80px;top:453.10px;width:1.00px;height:16.10px;background:#eaeaea;"></div>
<div style="left:822.90px;top:453.10px;width:1.00px;height:16.10px;background:#eaeaea;"></div>
<div style="left:882.80px;top:453.10px;width:1.00px;height:16.10px;background:#eaeaea;"></div>
<div style="left:942.50px;top:453.10px;width:1.00px;height:16.10px;background:#eaeaea;"></div>
<div style="left:1009.80px;top:453.10px;width:1.00px;height:16.10px;background:#eaeaea;"></div>
<div style="left:1057.30px;top:453.10px;width:1.00px;height:16.10px;background:#eaeaea;"></div>
<div style="left:1104.10px;top:453.10px;width:1.00px;height:16.10px;background:#eaeaea;"></div>
<span class="t" style="left:16.90px;top:456.45px;font-size:10.0px;line-height:11.490px;color:#474747;">3.3</span>
<span class="t" style="left:92.60px;top:456.45px;font-size:10.0px;line-height:11.490px;color:#1e1e1e;transform:scaleX(1.052);transform-origin:0 0;">Content plan</span>
<span class="t" style="right:702.95px;top:456.45px;font-size:10.0px;line-height:11.490px;color:#1e1e1e;letter-spacing:0.45px;">10/17/2024</span>
<span class="t" style="right:621.75px;top:456.45px;font-size:10.0px;line-height:11.490px;color:#1e1e1e;letter-spacing:0.45px;">10/21/2024</span>
<span class="t" style="right:514.20px;top:456.45px;font-size:10.0px;line-height:11.490px;color:#1e1e1e;">0</span>
<span class="t" style="right:439.30px;top:456.45px;font-size:10.0px;line-height:11.490px;color:#1e1e1e;">40</span>
<span class="t" style="right:369.20px;top:456.45px;font-size:10.0px;line-height:11.490px;color:#1e1e1e;">0</span>
<span class="t" style="right:289.10px;top:456.45px;font-size:10.0px;line-height:11.490px;color:#1e1e1e;">0</span>
<span class="t" style="right:55.30px;top:456.45px;font-size:10.0px;line-height:11.490px;color:#1e1e1e;">0</span>
<span class="t" style="right:8.50px;top:456.45px;font-size:10.0px;line-height:11.490px;color:#1e1e1e;">0</span>
<span class="t" style="left:826.50px;top:456.45px;font-size:10.0px;line-height:11.490px;color:#1e1e1e;">Open</span>
<span class="t" style="left:886.30px;top:456.45px;font-size:10.0px;line-height:11.490px;color:#1e1e1e;transform:scaleX(1.06);transform-origin:0 0;">Medium</span>
<div style="left:0.00px;top:469.00px;width:14.50px;height:16.00px;background:#4cc3d3;"></div>
<div style="left:14.50px;top:484.70px;width:1095.50px;height:1.00px;background:#eaeaea;"></div>
<div style="left:72.80px;top:469.20px;width:1.00px;height:16.00px;background:#eaeaea;"></div>
<div style="left:89.10px;top:469.20px;width:1.00px;height:16.00px;background:#eaeaea;"></div>
<div style="left:268.20px;top:469.20px;width:1.00px;height:16.00px;background:#eaeaea;"></div>
<div style="left:327.10px;top:469.20px;width:1.00px;height:16.00px;background:#eaeaea;"></div>
<div style="left:408.80px;top:469.20px;width:1.00px;height:16.00px;background:#eaeaea;"></div>
<div style="left:490.00px;top:469.20px;width:1.00px;height:16.00px;background:#eaeaea;"></div>
<div style="left:537.80px;top:469.20px;width:1.00px;height:16.00px;background:#eaeaea;"></div>
<div style="left:597.80px;top:469.20px;width:1.00px;height:16.00px;background:#eaeaea;"></div>
<div style="left:672.70px;top:469.20px;width:1.00px;height:16.00px;background:#eaeaea;"></div>
<div style="left:742.80px;top:469.20px;width:1.00px;height:16.00px;background:#eaeaea;"></div>
<div style="left:822.90px;top:469.20px;width:1.00px;height:16.00px;background:#eaeaea;"></div>
<div style="left:882.80px;top:469.20px;width:1.00px;height:16.00px;background:#eaeaea;"></div>
<div style="left:942.50px;top:469.20px;width:1.00px;height:16.00px;background:#eaeaea;"></div>
<div style="left:1009.80px;top:469.20px;width:1.00px;height:16.00px;background:#eaeaea;"></div>
<div style="left:1057.30px;top:469.20px;width:1.00px;height:16.00px;background:#eaeaea;"></div>
<div style="left:1104.10px;top:469.20px;width:1.00px;height:16.00px;background:#eaeaea;"></div>
<span class="t" style="left:16.90px;top:472.55px;font-size:10.0px;line-height:11.490px;color:#474747;">3.4</span>
<span class="t" style="left:92.60px;top:472.55px;font-size:10.0px;line-height:11.490px;color:#1e1e1e;transform:scaleX(1.06);transform-origin:0 0;">Content landing</span>
<span class="t" style="right:702.95px;top:472.55px;font-size:10.0px;line-height:11.490px;color:#1e1e1e;letter-spacing:0.45px;">10/24/2024</span>
<span class="t" style="right:621.75px;top:472.55px;font-size:10.0px;line-height:11.490px;color:#1e1e1e;letter-spacing:0.45px;">10/28/2024</span>
<span class="t" style="right:514.20px;top:472.55px;font-size:10.0px;line-height:11.490px;color:#1e1e1e;">0</span>
<span class="t" style="right:439.30px;top:472.55px;font-size:10.0px;line-height:11.490px;color:#1e1e1e;">40</span>
<span class="t" style="right:369.20px;top:472.55px;font-size:10.0px;line-height:11.490px;color:#1e1e1e;">0</span>
<span class="t" style="right:289.10px;top:472.55px;font-size:10.0px;line-height:11.490px;color:#1e1e1e;">0</span>
<span class="t" style="right:55.30px;top:472.55px;font-size:10.0px;line-height:11.490px;color:#1e1e1e;">0</span>
<span class="t" style="right:8.50px;top:472.55px;font-size:10.0px;line-height:11.490px;color:#1e1e1e;">0</span>
<span class="t" style="left:826.50px;top:472.55px;font-size:10.0px;line-height:11.490px;color:#1e1e1e;">Open</span>
<span class="t" style="left:886.30px;top:472.55px;font-size:10.0px;line-height:11.490px;color:#1e1e1e;transform:scaleX(1.06);transform-origin:0 0;">Medium</span>
<div style="left:0.00px;top:485.00px;width:14.50px;height:16.00px;background:#4cc3d3;"></div>
<div style="left:14.50px;top:500.70px;width:1095.50px;height:1.00px;background:#eaeaea;"></div>
<div style="left:72.80px;top:485.20px;width:1.00px;height:16.00px;background:#eaeaea;"></div>
<div style="left:89.10px;top:485.20px;width:1.00px;height:16.00px;background:#eaeaea;"></div>
<div style="left:268.20px;top:485.20px;width:1.00px;height:16.00px;background:#eaeaea;"></div>
<div style="left:327.10px;top:485.20px;width:1.00px;height:16.00px;background:#eaeaea;"></div>
<div style="left:408.80px;top:485.20px;width:1.00px;height:16.00px;background:#eaeaea;"></div>
<div style="left:490.00px;top:485.20px;width:1.00px;height:16.00px;background:#eaeaea;"></div>
<div style="left:537.80px;top:485.20px;width:1.00px;height:16.00px;background:#eaeaea;"></div>
<div style="left:597.80px;top:485.20px;width:1.00px;height:16.00px;background:#eaeaea;"></div>
<div style="left:672.70px;top:485.20px;width:1.00px;height:16.00px;background:#eaeaea;"></div>
<div style="left:742.80px;top:485.20px;width:1.00px;height:16.00px;background:#eaeaea;"></div>
<div style="left:822.90px;top:485.20px;width:1.00px;height:16.00px;background:#eaeaea;"></div>
<div style="left:882.80px;top:485.20px;width:1.00px;height:16.00px;background:#eaeaea;"></div>
<div style="left:942.50px;top:485.20px;width:1.00px;height:16.00px;background:#eaeaea;"></div>
<div style="left:1009.80px;top:485.20px;width:1.00px;height:16.00px;background:#eaeaea;"></div>
<div style="left:1057.30px;top:485.20px;width:1.00px;height:16.00px;background:#eaeaea;"></div>
<div style="left:1104.10px;top:485.20px;width:1.00px;height:16.00px;background:#eaeaea;"></div>
<span class="t" style="left:16.90px;top:488.55px;font-size:10.0px;line-height:11.490px;color:#474747;">3.5</span>
<span class="t" style="left:92.60px;top:488.55px;font-size:10.0px;line-height:11.490px;color:#1e1e1e;transform:scaleX(1.026);transform-origin:0 0;">Semantics updates</span>
<span class="t" style="right:702.95px;top:488.55px;font-size:10.0px;line-height:11.490px;color:#1e1e1e;letter-spacing:0.45px;">10/31/2024</span>
<span class="t" style="right:621.75px;top:488.55px;font-size:10.0px;line-height:11.490px;color:#1e1e1e;letter-spacing:0.45px;">11/4/2024</span>
<span class="t" style="right:514.20px;top:488.55px;font-size:10.0px;line-height:11.490px;color:#1e1e1e;">0</span>
<span class="t" style="right:439.30px;top:488.55px;font-size:10.0px;line-height:11.490px;color:#1e1e1e;">40</span>
<span class="t" style="right:369.20px;top:488.55px;font-size:10.0px;line-height:11.490px;color:#1e1e1e;">0</span>
<span class="t" style="right:289.10px;top:488.55px;font-size:10.0px;line-height:11.490px;color:#1e1e1e;">0</span>
<span class="t" style="right:55.30px;top:488.55px;font-size:10.0px;line-height:11.490px;color:#1e1e1e;">0</span>
<span class="t" style="right:8.50px;top:488.55px;font-size:10.0px;line-height:11.490px;color:#1e1e1e;">0</span>
<span class="t" style="left:826.50px;top:488.55px;font-size:10.0px;line-height:11.490px;color:#1e1e1e;">Open</span>
<span class="t" style="left:886.30px;top:488.55px;font-size:10.0px;line-height:11.490px;color:#1e1e1e;transform:scaleX(1.06);transform-origin:0 0;">Medium</span>
<div style="left:0.00px;top:501.00px;width:14.50px;height:16.00px;background:#f9c57f;"></div>
<div style="left:14.50px;top:516.60px;width:1095.50px;height:1.00px;background:#eaeaea;"></div>
<div style="left:72.80px;top:501.20px;width:1.00px;height:15.90px;background:#eaeaea;"></div>
<div style="left:268.20px;top:501.20px;width:1.00px;height:15.90px;background:#eaeaea;"></div>
<div style="left:327.10px;top:501.20px;width:1.00px;height:15.90px;background:#eaeaea;"></div>
<div style="left:408.80px;top:501.20px;width:1.00px;height:15.90px;background:#eaeaea;"></div>
<div style="left:490.00px;top:501.20px;width:1.00px;height:15.90px;background:#eaeaea;"></div>
<div style="left:537.80px;top:501.20px;width:1.00px;height:15.90px;background:#eaeaea;"></div>
<div style="left:597.80px;top:501.20px;width:1.00px;height:15.90px;background:#eaeaea;"></div>
<div style="left:672.70px;top:501.20px;width:1.00px;height:15.90px;background:#eaeaea;"></div>
<div style="left:742.80px;top:501.20px;width:1.00px;height:15.90px;background:#eaeaea;"></div>
<div style="left:822.90px;top:501.20px;width:1.00px;height:15.90px;background:#eaeaea;"></div>
<div style="left:882.80px;top:501.20px;width:1.00px;height:15.90px;background:#eaeaea;"></div>
<div style="left:942.50px;top:501.20px;width:1.00px;height:15.90px;background:#eaeaea;"></div>
<div style="left:1009.80px;top:501.20px;width:1.00px;height:15.90px;background:#eaeaea;"></div>
<div style="left:1057.30px;top:501.20px;width:1.00px;height:15.90px;background:#eaeaea;"></div>
<div style="left:1104.10px;top:501.20px;width:1.00px;height:15.90px;background:#eaeaea;"></div>
<span class="t" style="left:16.90px;top:504.55px;font-size:10.0px;line-height:11.490px;font-weight:bold;-webkit-text-stroke:0.05px currentColor;color:#141414;">4</span>
<span class="t" style="left:76.70px;top:504.55px;font-size:10.0px;line-height:11.490px;font-weight:bold;-webkit-text-stroke:0.05px currentColor;color:#141414;transform:scaleX(0.968);transform-origin:0 0;">Offsite LinkBuiilding</span>
<span class="t" style="right:702.95px;top:504.55px;font-size:10.0px;line-height:11.490px;font-weight:bold;-webkit-text-stroke:0.05px currentColor;color:#141414;letter-spacing:0.45px;">10/3/2024</span>
<span class="t" style="right:621.75px;top:504.55px;font-size:10.0px;line-height:11.490px;font-weight:bold;-webkit-text-stroke:0.05px currentColor;color:#141414;letter-spacing:0.45px;">11/18/2024</span>
<span class="t" style="right:514.20px;top:504.55px;font-size:10.0px;line-height:11.490px;font-weight:bold;-webkit-text-stroke:0.05px currentColor;color:#141414;">0</span>
<span class="t" style="right:439.30px;top:504.55px;font-size:10.0px;line-height:11.490px;font-weight:bold;-webkit-text-stroke:0.05px currentColor;color:#141414;">280</span>
<span class="t" style="right:369.20px;top:504.55px;font-size:10.0px;line-height:11.490px;font-weight:bold;-webkit-text-stroke:0.05px currentColor;color:#141414;">0</span>
<span class="t" style="right:289.10px;top:504.55px;font-size:10.0px;line-height:11.490px;font-weight:bold;-webkit-text-stroke:0.05px currentColor;color:#141414;">0</span>
<span class="t" style="right:55.30px;top:504.55px;font-size:10.0px;line-height:11.490px;font-weight:bold;-webkit-text-stroke:0.05px currentColor;color:#141414;">0</span>
<span class="t" style="right:8.50px;top:504.55px;font-size:10.0px;line-height:11.490px;font-weight:bold;-webkit-text-stroke:0.05px currentColor;color:#141414;">0</span>
<div style="left:0.00px;top:517.00px;width:14.50px;height:16.00px;background:#4cc3d3;"></div>
<div style="left:14.50px;top:532.50px;width:1095.50px;height:1.00px;background:#eaeaea;"></div>
<div style="left:72.80px;top:517.10px;width:1.00px;height:15.90px;background:#eaeaea;"></div>
<div style="left:89.10px;top:517.10px;width:1.00px;height:15.90px;background:#eaeaea;"></div>
<div style="left:268.20px;top:517.10px;width:1.00px;height:15.90px;background:#eaeaea;"></div>
<div style="left:327.10px;top:517.10px;width:1.00px;height:15.90px;background:#eaeaea;"></div>
<div style="left:408.80px;top:517.10px;width:1.00px;height:15.90px;background:#eaeaea;"></div>
<div style="left:490.00px;top:517.10px;width:1.00px;height:15.90px;background:#eaeaea;"></div>
<div style="left:537.80px;top:517.10px;width:1.00px;height:15.90px;background:#eaeaea;"></div>
<div style="left:597.80px;top:517.10px;width:1.00px;height:15.90px;background:#eaeaea;"></div>
<div style="left:672.70px;top:517.10px;width:1.00px;height:15.90px;background:#eaeaea;"></div>
<div style="left:742.80px;top:517.10px;width:1.00px;height:15.90px;background:#eaeaea;"></div>
<div style="left:822.90px;top:517.10px;width:1.00px;height:15.90px;background:#eaeaea;"></div>
<div style="left:882.80px;top:517.10px;width:1.00px;height:15.90px;background:#eaeaea;"></div>
<div style="left:942.50px;top:517.10px;width:1.00px;height:15.90px;background:#eaeaea;"></div>
<div style="left:1009.80px;top:517.10px;width:1.00px;height:15.90px;background:#eaeaea;"></div>
<div style="left:1057.30px;top:517.10px;width:1.00px;height:15.90px;background:#eaeaea;"></div>
<div style="left:1104.10px;top:517.10px;width:1.00px;height:15.90px;background:#eaeaea;"></div>
<span class="t" style="left:16.90px;top:521.45px;font-size:10.0px;line-height:11.490px;color:#474747;">4.1</span>
<span class="t" style="left:92.60px;top:521.45px;font-size:10.0px;line-height:11.490px;color:#1e1e1e;transform:scaleX(1.039);transform-origin:0 0;">Forum/Blogs guest posting</span>
<span class="t" style="right:702.95px;top:521.45px;font-size:10.0px;line-height:11.490px;color:#1e1e1e;letter-spacing:0.45px;">10/3/2024</span>
<span class="t" style="right:621.75px;top:521.45px;font-size:10.0px;line-height:11.490px;color:#1e1e1e;letter-spacing:0.45px;">10/7/2024</span>
<span class="t" style="right:514.20px;top:521.45px;font-size:10.0px;line-height:11.490px;color:#1e1e1e;">0</span>
<span class="t" style="right:439.30px;top:521.45px;font-size:10.0px;line-height:11.490px;color:#1e1e1e;">40</span>
<span class="t" style="right:369.20px;top:521.45px;font-size:10.0px;line-height:11.490px;color:#1e1e1e;">0</span>
<span class="t" style="right:289.10px;top:521.45px;font-size:10.0px;line-height:11.490px;color:#1e1e1e;">0</span>
<span class="t" style="right:55.30px;top:521.45px;font-size:10.0px;line-height:11.490px;color:#1e1e1e;">0</span>
<span class="t" style="right:8.50px;top:521.45px;font-size:10.0px;line-height:11.490px;color:#1e1e1e;">0</span>
<span class="t" style="left:826.50px;top:521.45px;font-size:10.0px;line-height:11.490px;color:#1e1e1e;">Open</span>
<span class="t" style="left:886.30px;top:521.45px;font-size:10.0px;line-height:11.490px;color:#1e1e1e;transform:scaleX(1.06);transform-origin:0 0;">Medium</span>
</div>
<div style="left:0.00px;top:529.00px;width:1110.00px;height:10.40px;background:#fff;"></div>
<div style="left:0.50px;top:531.10px;width:822.20px;height:6.00px;background:#dadce0;border-radius:3px;"></div>
<div style="left:1093.30px;top:529.00px;width:11.60px;height:10.40px;background:#f3f3f3;border-left:1px solid #e8e8e8;box-sizing:border-box;"></div>
<div style="left:1097.5px;top:532.2px;width:0;height:0;border-top:2px solid transparent;border-bottom:2px solid transparent;border-right:2.6px solid #9a9a9a;"></div>
<div style="left:0.00px;top:539.40px;width:1110.00px;height:27.60px;background:#f9fbfd;"></div>
<div style="left:0.00px;top:539.00px;width:1110.00px;height:0.60px;background:#e8eaed;"></div>
<div style="left:65.70px;top:539.60px;width:140.70px;height:27.40px;background:#e1e9f7;"></div>
<div style="left:6.40px;top:553.30px;width:7.60px;height:1.10px;background:#474747;"></div>
<div style="left:9.70px;top:550.00px;width:1.10px;height:7.90px;background:#474747;"></div>
<div style="left:35.60px;top:550.20px;width:11.00px;height:1.25px;background:#444746;"></div>
<div style="left:35.60px;top:553.20px;width:11.00px;height:1.25px;background:#444746;"></div>
<div style="left:35.60px;top:556.20px;width:11.00px;height:1.25px;background:#444746;"></div>
<span class="t" style="left:75.30px;top:548.14px;font-size:12px;line-height:13.788px;color:#0b57d0;letter-spacing:0.1px;-webkit-text-stroke:0.45px #0b57d0;">Seo Marketing Plan</span>
<div style="left:191.3px;top:552.5px;width:0;height:0;border-left:3px solid transparent;border-right:3px solid transparent;border-top:3.2px solid #0b57d0;"></div>
<svg style="position:absolute;left:1100px;top:549px" width="10" height="12" viewBox="0 0 10 12"><path d="M7 2.8 L3.3 6.5 L7 10.2" fill="none" stroke="#444746" stroke-width="1.3"/></svg>
</body></html>
